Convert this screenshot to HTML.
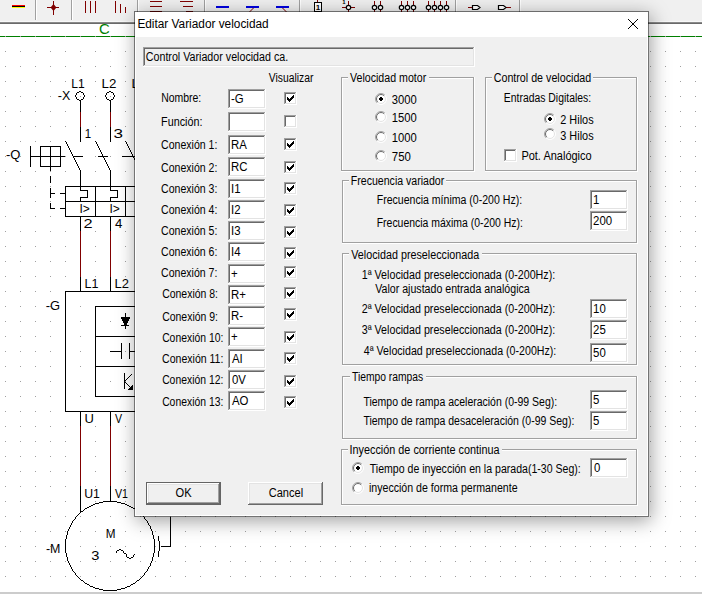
<!DOCTYPE html><html><head><meta charset="utf-8"><style>
html,body{margin:0;padding:0;width:702px;height:594px;overflow:hidden;background:#fff}
svg{position:absolute;left:0;top:0;display:block} text{font-family:"Liberation Sans", sans-serif}
#dlg{position:absolute;left:134px;top:11px;width:515px;height:506px;box-shadow:2px 4px 18px rgba(0,0,0,0.38);}
</style></head><body>
<svg width="702" height="594" shape-rendering="crispEdges">
<defs><pattern id="dots" x="5" y="6" width="15" height="15" patternUnits="userSpaceOnUse"><rect x="0" y="0" width="1" height="1" fill="#a0a0a0"/></pattern></defs>
<rect x="0" y="0" width="702" height="594" fill="#fff"/>
<rect x="0" y="24" width="702" height="566" fill="url(#dots)"/>
<rect x="0" y="0" width="702" height="22" fill="#f0f0f0"/>
<rect x="0" y="21" width="702" height="1" fill="#f8f8f8"/>
<rect x="0" y="22" width="702" height="1" fill="#8a8a8a"/>
<rect x="0" y="23" width="702" height="1" fill="#6a6a6a"/>
<rect x="0" y="592" width="702" height="2" fill="#cccccc"/>
<rect x="35" y="0" width="1" height="20" fill="#a0a0a0"/>
<rect x="36" y="0" width="1" height="20" fill="#fff"/>
<rect x="71" y="0" width="1" height="20" fill="#a0a0a0"/>
<rect x="72" y="0" width="1" height="20" fill="#fff"/>
<rect x="137" y="0" width="1" height="20" fill="#a0a0a0"/>
<rect x="138" y="0" width="1" height="20" fill="#fff"/>
<rect x="204" y="0" width="1" height="20" fill="#a0a0a0"/>
<rect x="205" y="0" width="1" height="20" fill="#fff"/>
<rect x="299" y="0" width="1" height="20" fill="#a0a0a0"/>
<rect x="300" y="0" width="1" height="20" fill="#fff"/>
<rect x="455" y="0" width="1" height="20" fill="#a0a0a0"/>
<rect x="456" y="0" width="1" height="20" fill="#fff"/>
<rect x="519" y="0" width="1" height="20" fill="#a0a0a0"/>
<rect x="520" y="0" width="1" height="20" fill="#fff"/>
<rect x="12" y="5" width="13" height="1" fill="#ff0000"/>
<rect x="12" y="6" width="13" height="1" fill="#000"/>
<rect x="12" y="7" width="13" height="1" fill="#ffff00"/>
<rect x="47" y="7" width="12" height="1" fill="#800000"/>
<rect x="53" y="1" width="1" height="14" fill="#800000"/>
<path d="M53.5,4 L56.5,7.5 L53.5,11 L50.5,7.5Z" fill="#800000" shape-rendering="geometricPrecision"/>
<rect x="85" y="1" width="1" height="12" fill="#800000"/>
<rect x="90" y="1" width="1" height="12" fill="#800000"/>
<rect x="95" y="1" width="1" height="12" fill="#800000"/>
<rect x="115" y="1" width="1" height="12" fill="#800000"/>
<rect x="120" y="4" width="1" height="9" fill="#800000"/>
<rect x="125" y="7" width="1" height="6" fill="#800000"/>
<rect x="150" y="1" width="12" height="1" fill="#800000"/>
<rect x="150" y="6" width="12" height="1" fill="#800000"/>
<rect x="150" y="11" width="12" height="1" fill="#800000"/>
<rect x="180" y="1" width="13" height="1" fill="#800000"/>
<rect x="183" y="6" width="10" height="1" fill="#800000"/>
<rect x="186" y="11" width="7" height="1" fill="#800000"/>
<rect x="216" y="6" width="13" height="2" fill="#0000e0"/>
<rect x="246" y="6" width="13" height="2" fill="#0000e0"/>
<rect x="276" y="6" width="13" height="2" fill="#0000e0"/>
<path d="M249.5,12 L253.5,8 M282.5,8 L286.5,12" stroke="#800000" fill="none" shape-rendering="geometricPrecision"/>
<rect x="317" y="0" width="1" height="3" fill="#800000"/>
<rect x="314" y="2" width="8" height="10" fill="#000"/>
<rect x="315" y="3" width="6" height="8" fill="#fff"/>
<text x="318" y="10" font-size="8" font-weight="bold" text-anchor="middle" fill="#000">1</text>
<rect x="348" y="1" width="1" height="12" fill="#800000"/>
<rect x="342" y="7" width="13" height="1" fill="#800000"/>
<circle cx="348.5" cy="7.5" r="2.2" fill="#fff" stroke="#000" stroke-width="1.2" shape-rendering="geometricPrecision"/>
<text x="344" y="4" font-size="6" font-weight="bold" text-anchor="middle" fill="#000">1</text>
<rect x="374" y="1" width="1" height="12" fill="#800000"/>
<circle cx="374.5" cy="7.5" r="2.2" fill="#fff" stroke="#000" stroke-width="1.2" shape-rendering="geometricPrecision"/>
<rect x="380" y="1" width="1" height="12" fill="#800000"/>
<circle cx="380.5" cy="7.5" r="2.2" fill="#fff" stroke="#000" stroke-width="1.2" shape-rendering="geometricPrecision"/>
<rect x="401" y="1" width="1" height="12" fill="#800000"/>
<circle cx="401.5" cy="7.5" r="2.2" fill="#fff" stroke="#000" stroke-width="1.2" shape-rendering="geometricPrecision"/>
<rect x="407" y="1" width="1" height="12" fill="#800000"/>
<circle cx="407.5" cy="7.5" r="2.2" fill="#fff" stroke="#000" stroke-width="1.2" shape-rendering="geometricPrecision"/>
<rect x="413" y="1" width="1" height="12" fill="#800000"/>
<circle cx="413.5" cy="7.5" r="2.2" fill="#fff" stroke="#000" stroke-width="1.2" shape-rendering="geometricPrecision"/>
<rect x="428" y="1" width="1" height="12" fill="#800000"/>
<circle cx="428.5" cy="7.5" r="2.2" fill="#fff" stroke="#000" stroke-width="1.2" shape-rendering="geometricPrecision"/>
<rect x="434" y="1" width="1" height="12" fill="#800000"/>
<circle cx="434.5" cy="7.5" r="2.2" fill="#fff" stroke="#000" stroke-width="1.2" shape-rendering="geometricPrecision"/>
<rect x="440" y="1" width="1" height="12" fill="#800000"/>
<circle cx="440.5" cy="7.5" r="2.2" fill="#fff" stroke="#000" stroke-width="1.2" shape-rendering="geometricPrecision"/>
<rect x="446" y="1" width="1" height="12" fill="#800000"/>
<circle cx="446.5" cy="7.5" r="2.2" fill="#fff" stroke="#000" stroke-width="1.2" shape-rendering="geometricPrecision"/>
<rect x="468" y="7" width="5" height="1" fill="#800000"/>
<path d="M472.5,5.5 L477.5,5.5 L480,7.5 L477.5,9.5 L472.5,9.5Z" fill="#fff" stroke="#000" stroke-width="1.2" shape-rendering="geometricPrecision"/>
<rect x="505" y="7" width="6" height="1" fill="#800000"/>
<path d="M498.5,5.5 L503.5,5.5 L506,7.5 L503.5,9.5 L498.5,9.5Z" fill="#fff" stroke="#000" stroke-width="1.2" shape-rendering="geometricPrecision"/>
<rect x="0" y="36" width="5" height="1" fill="#008000"/>
<rect x="6" y="36" width="14" height="1" fill="#008000"/>
<rect x="21" y="36" width="14" height="1" fill="#008000"/>
<rect x="36" y="36" width="14" height="1" fill="#008000"/>
<rect x="51" y="36" width="14" height="1" fill="#008000"/>
<rect x="66" y="36" width="14" height="1" fill="#008000"/>
<rect x="81" y="36" width="14" height="1" fill="#008000"/>
<rect x="96" y="36" width="14" height="1" fill="#008000"/>
<rect x="111" y="36" width="14" height="1" fill="#008000"/>
<rect x="126" y="36" width="14" height="1" fill="#008000"/>
<rect x="141" y="36" width="14" height="1" fill="#008000"/>
<rect x="156" y="36" width="14" height="1" fill="#008000"/>
<rect x="171" y="36" width="14" height="1" fill="#008000"/>
<rect x="186" y="36" width="14" height="1" fill="#008000"/>
<rect x="201" y="36" width="14" height="1" fill="#008000"/>
<rect x="216" y="36" width="14" height="1" fill="#008000"/>
<rect x="231" y="36" width="14" height="1" fill="#008000"/>
<rect x="246" y="36" width="14" height="1" fill="#008000"/>
<rect x="261" y="36" width="14" height="1" fill="#008000"/>
<rect x="276" y="36" width="14" height="1" fill="#008000"/>
<rect x="291" y="36" width="14" height="1" fill="#008000"/>
<rect x="306" y="36" width="14" height="1" fill="#008000"/>
<rect x="321" y="36" width="14" height="1" fill="#008000"/>
<rect x="336" y="36" width="14" height="1" fill="#008000"/>
<rect x="351" y="36" width="14" height="1" fill="#008000"/>
<rect x="366" y="36" width="14" height="1" fill="#008000"/>
<rect x="381" y="36" width="14" height="1" fill="#008000"/>
<rect x="396" y="36" width="14" height="1" fill="#008000"/>
<rect x="411" y="36" width="14" height="1" fill="#008000"/>
<rect x="426" y="36" width="14" height="1" fill="#008000"/>
<rect x="441" y="36" width="14" height="1" fill="#008000"/>
<rect x="456" y="36" width="14" height="1" fill="#008000"/>
<rect x="471" y="36" width="14" height="1" fill="#008000"/>
<rect x="486" y="36" width="14" height="1" fill="#008000"/>
<rect x="501" y="36" width="14" height="1" fill="#008000"/>
<rect x="516" y="36" width="14" height="1" fill="#008000"/>
<rect x="531" y="36" width="14" height="1" fill="#008000"/>
<rect x="546" y="36" width="14" height="1" fill="#008000"/>
<rect x="561" y="36" width="14" height="1" fill="#008000"/>
<rect x="576" y="36" width="14" height="1" fill="#008000"/>
<rect x="591" y="36" width="14" height="1" fill="#008000"/>
<rect x="606" y="36" width="14" height="1" fill="#008000"/>
<rect x="621" y="36" width="14" height="1" fill="#008000"/>
<rect x="636" y="36" width="14" height="1" fill="#008000"/>
<rect x="651" y="36" width="14" height="1" fill="#008000"/>
<rect x="666" y="36" width="14" height="1" fill="#008000"/>
<rect x="681" y="36" width="14" height="1" fill="#008000"/>
<rect x="696" y="36" width="6" height="1" fill="#008000"/>
<rect x="711" y="36" width="-9" height="1" fill="#008000"/>
<text x="99.04" y="34" font-size="14" fill="#008000" textLength="10.76" lengthAdjust="spacingAndGlyphs">C</text>
<rect x="79" y="91" width="1" height="1" fill="#000"/>
<rect x="80" y="91" width="1" height="1" fill="#000"/>
<rect x="77" y="92" width="1" height="1" fill="#000"/>
<rect x="78" y="92" width="1" height="1" fill="#000"/>
<rect x="81" y="92" width="1" height="1" fill="#000"/>
<rect x="82" y="92" width="1" height="1" fill="#000"/>
<rect x="76" y="93" width="1" height="1" fill="#000"/>
<rect x="83" y="93" width="1" height="1" fill="#000"/>
<rect x="76" y="94" width="1" height="1" fill="#000"/>
<rect x="83" y="94" width="1" height="1" fill="#000"/>
<rect x="75" y="95" width="1" height="1" fill="#000"/>
<rect x="84" y="95" width="1" height="1" fill="#000"/>
<rect x="75" y="96" width="1" height="1" fill="#000"/>
<rect x="84" y="96" width="1" height="1" fill="#000"/>
<rect x="76" y="97" width="1" height="1" fill="#000"/>
<rect x="83" y="97" width="1" height="1" fill="#000"/>
<rect x="76" y="98" width="1" height="1" fill="#000"/>
<rect x="83" y="98" width="1" height="1" fill="#000"/>
<rect x="77" y="99" width="1" height="1" fill="#000"/>
<rect x="78" y="99" width="1" height="1" fill="#000"/>
<rect x="81" y="99" width="1" height="1" fill="#000"/>
<rect x="82" y="99" width="1" height="1" fill="#000"/>
<rect x="79" y="100" width="1" height="1" fill="#000"/>
<rect x="80" y="100" width="1" height="1" fill="#000"/>
<rect x="80" y="101" width="1" height="11" fill="#000"/>
<rect x="80" y="112" width="1" height="15" fill="#800000"/>
<rect x="80" y="127" width="1" height="15" fill="#000"/>
<rect x="65" y="141" width="1" height="1" fill="#000"/>
<rect x="66" y="142" width="1" height="1" fill="#000"/>
<rect x="66" y="143" width="1" height="1" fill="#000"/>
<rect x="67" y="144" width="1" height="1" fill="#000"/>
<rect x="67" y="145" width="1" height="1" fill="#000"/>
<rect x="68" y="146" width="1" height="1" fill="#000"/>
<rect x="68" y="147" width="1" height="1" fill="#000"/>
<rect x="69" y="148" width="1" height="1" fill="#000"/>
<rect x="69" y="149" width="1" height="1" fill="#000"/>
<rect x="70" y="150" width="1" height="1" fill="#000"/>
<rect x="70" y="151" width="1" height="1" fill="#000"/>
<rect x="71" y="152" width="1" height="1" fill="#000"/>
<rect x="71" y="153" width="1" height="1" fill="#000"/>
<rect x="72" y="154" width="1" height="1" fill="#000"/>
<rect x="72" y="155" width="1" height="1" fill="#000"/>
<rect x="73" y="156" width="1" height="1" fill="#000"/>
<rect x="73" y="157" width="1" height="1" fill="#000"/>
<rect x="74" y="158" width="1" height="1" fill="#000"/>
<rect x="74" y="159" width="1" height="1" fill="#000"/>
<rect x="75" y="160" width="1" height="1" fill="#000"/>
<rect x="75" y="161" width="1" height="1" fill="#000"/>
<rect x="76" y="162" width="1" height="1" fill="#000"/>
<rect x="76" y="163" width="1" height="1" fill="#000"/>
<rect x="77" y="164" width="1" height="1" fill="#000"/>
<rect x="77" y="165" width="1" height="1" fill="#000"/>
<rect x="78" y="166" width="1" height="1" fill="#000"/>
<rect x="78" y="167" width="1" height="1" fill="#000"/>
<rect x="79" y="168" width="1" height="1" fill="#000"/>
<rect x="79" y="169" width="1" height="1" fill="#000"/>
<rect x="80" y="170" width="1" height="1" fill="#000"/>
<rect x="80" y="171" width="1" height="1" fill="#000"/>
<rect x="80" y="171" width="1" height="16" fill="#000"/>
<rect x="80" y="216" width="1" height="15" fill="#000"/>
<rect x="80" y="231" width="1" height="46" fill="#800000"/>
<rect x="80" y="277" width="1" height="15" fill="#000"/>
<rect x="80" y="411" width="1" height="15" fill="#000"/>
<rect x="80" y="426" width="1" height="61" fill="#800000"/>
<rect x="109" y="91" width="1" height="1" fill="#000"/>
<rect x="110" y="91" width="1" height="1" fill="#000"/>
<rect x="107" y="92" width="1" height="1" fill="#000"/>
<rect x="108" y="92" width="1" height="1" fill="#000"/>
<rect x="111" y="92" width="1" height="1" fill="#000"/>
<rect x="112" y="92" width="1" height="1" fill="#000"/>
<rect x="106" y="93" width="1" height="1" fill="#000"/>
<rect x="113" y="93" width="1" height="1" fill="#000"/>
<rect x="106" y="94" width="1" height="1" fill="#000"/>
<rect x="113" y="94" width="1" height="1" fill="#000"/>
<rect x="105" y="95" width="1" height="1" fill="#000"/>
<rect x="114" y="95" width="1" height="1" fill="#000"/>
<rect x="105" y="96" width="1" height="1" fill="#000"/>
<rect x="114" y="96" width="1" height="1" fill="#000"/>
<rect x="106" y="97" width="1" height="1" fill="#000"/>
<rect x="113" y="97" width="1" height="1" fill="#000"/>
<rect x="106" y="98" width="1" height="1" fill="#000"/>
<rect x="113" y="98" width="1" height="1" fill="#000"/>
<rect x="107" y="99" width="1" height="1" fill="#000"/>
<rect x="108" y="99" width="1" height="1" fill="#000"/>
<rect x="111" y="99" width="1" height="1" fill="#000"/>
<rect x="112" y="99" width="1" height="1" fill="#000"/>
<rect x="109" y="100" width="1" height="1" fill="#000"/>
<rect x="110" y="100" width="1" height="1" fill="#000"/>
<rect x="110" y="101" width="1" height="11" fill="#000"/>
<rect x="110" y="112" width="1" height="15" fill="#800000"/>
<rect x="110" y="127" width="1" height="15" fill="#000"/>
<rect x="95" y="141" width="1" height="1" fill="#000"/>
<rect x="96" y="142" width="1" height="1" fill="#000"/>
<rect x="96" y="143" width="1" height="1" fill="#000"/>
<rect x="97" y="144" width="1" height="1" fill="#000"/>
<rect x="97" y="145" width="1" height="1" fill="#000"/>
<rect x="98" y="146" width="1" height="1" fill="#000"/>
<rect x="98" y="147" width="1" height="1" fill="#000"/>
<rect x="99" y="148" width="1" height="1" fill="#000"/>
<rect x="99" y="149" width="1" height="1" fill="#000"/>
<rect x="100" y="150" width="1" height="1" fill="#000"/>
<rect x="100" y="151" width="1" height="1" fill="#000"/>
<rect x="101" y="152" width="1" height="1" fill="#000"/>
<rect x="101" y="153" width="1" height="1" fill="#000"/>
<rect x="102" y="154" width="1" height="1" fill="#000"/>
<rect x="102" y="155" width="1" height="1" fill="#000"/>
<rect x="103" y="156" width="1" height="1" fill="#000"/>
<rect x="103" y="157" width="1" height="1" fill="#000"/>
<rect x="104" y="158" width="1" height="1" fill="#000"/>
<rect x="104" y="159" width="1" height="1" fill="#000"/>
<rect x="105" y="160" width="1" height="1" fill="#000"/>
<rect x="105" y="161" width="1" height="1" fill="#000"/>
<rect x="106" y="162" width="1" height="1" fill="#000"/>
<rect x="106" y="163" width="1" height="1" fill="#000"/>
<rect x="107" y="164" width="1" height="1" fill="#000"/>
<rect x="107" y="165" width="1" height="1" fill="#000"/>
<rect x="108" y="166" width="1" height="1" fill="#000"/>
<rect x="108" y="167" width="1" height="1" fill="#000"/>
<rect x="109" y="168" width="1" height="1" fill="#000"/>
<rect x="109" y="169" width="1" height="1" fill="#000"/>
<rect x="110" y="170" width="1" height="1" fill="#000"/>
<rect x="110" y="171" width="1" height="1" fill="#000"/>
<rect x="110" y="171" width="1" height="16" fill="#000"/>
<rect x="110" y="216" width="1" height="15" fill="#000"/>
<rect x="110" y="231" width="1" height="46" fill="#800000"/>
<rect x="110" y="277" width="1" height="15" fill="#000"/>
<rect x="110" y="411" width="1" height="15" fill="#000"/>
<rect x="110" y="426" width="1" height="61" fill="#800000"/>
<rect x="139" y="91" width="1" height="1" fill="#000"/>
<rect x="140" y="91" width="1" height="1" fill="#000"/>
<rect x="137" y="92" width="1" height="1" fill="#000"/>
<rect x="138" y="92" width="1" height="1" fill="#000"/>
<rect x="141" y="92" width="1" height="1" fill="#000"/>
<rect x="142" y="92" width="1" height="1" fill="#000"/>
<rect x="136" y="93" width="1" height="1" fill="#000"/>
<rect x="143" y="93" width="1" height="1" fill="#000"/>
<rect x="136" y="94" width="1" height="1" fill="#000"/>
<rect x="143" y="94" width="1" height="1" fill="#000"/>
<rect x="135" y="95" width="1" height="1" fill="#000"/>
<rect x="144" y="95" width="1" height="1" fill="#000"/>
<rect x="135" y="96" width="1" height="1" fill="#000"/>
<rect x="144" y="96" width="1" height="1" fill="#000"/>
<rect x="136" y="97" width="1" height="1" fill="#000"/>
<rect x="143" y="97" width="1" height="1" fill="#000"/>
<rect x="136" y="98" width="1" height="1" fill="#000"/>
<rect x="143" y="98" width="1" height="1" fill="#000"/>
<rect x="137" y="99" width="1" height="1" fill="#000"/>
<rect x="138" y="99" width="1" height="1" fill="#000"/>
<rect x="141" y="99" width="1" height="1" fill="#000"/>
<rect x="142" y="99" width="1" height="1" fill="#000"/>
<rect x="139" y="100" width="1" height="1" fill="#000"/>
<rect x="140" y="100" width="1" height="1" fill="#000"/>
<rect x="140" y="101" width="1" height="11" fill="#000"/>
<rect x="140" y="112" width="1" height="15" fill="#800000"/>
<rect x="140" y="127" width="1" height="15" fill="#000"/>
<rect x="125" y="141" width="1" height="1" fill="#000"/>
<rect x="126" y="142" width="1" height="1" fill="#000"/>
<rect x="126" y="143" width="1" height="1" fill="#000"/>
<rect x="127" y="144" width="1" height="1" fill="#000"/>
<rect x="127" y="145" width="1" height="1" fill="#000"/>
<rect x="128" y="146" width="1" height="1" fill="#000"/>
<rect x="128" y="147" width="1" height="1" fill="#000"/>
<rect x="129" y="148" width="1" height="1" fill="#000"/>
<rect x="129" y="149" width="1" height="1" fill="#000"/>
<rect x="130" y="150" width="1" height="1" fill="#000"/>
<rect x="130" y="151" width="1" height="1" fill="#000"/>
<rect x="131" y="152" width="1" height="1" fill="#000"/>
<rect x="131" y="153" width="1" height="1" fill="#000"/>
<rect x="132" y="154" width="1" height="1" fill="#000"/>
<rect x="132" y="155" width="1" height="1" fill="#000"/>
<rect x="133" y="156" width="1" height="1" fill="#000"/>
<rect x="133" y="157" width="1" height="1" fill="#000"/>
<rect x="134" y="158" width="1" height="1" fill="#000"/>
<rect x="134" y="159" width="1" height="1" fill="#000"/>
<rect x="135" y="160" width="1" height="1" fill="#000"/>
<rect x="135" y="161" width="1" height="1" fill="#000"/>
<rect x="136" y="162" width="1" height="1" fill="#000"/>
<rect x="136" y="163" width="1" height="1" fill="#000"/>
<rect x="137" y="164" width="1" height="1" fill="#000"/>
<rect x="137" y="165" width="1" height="1" fill="#000"/>
<rect x="138" y="166" width="1" height="1" fill="#000"/>
<rect x="138" y="167" width="1" height="1" fill="#000"/>
<rect x="139" y="168" width="1" height="1" fill="#000"/>
<rect x="139" y="169" width="1" height="1" fill="#000"/>
<rect x="140" y="170" width="1" height="1" fill="#000"/>
<rect x="140" y="171" width="1" height="1" fill="#000"/>
<rect x="140" y="171" width="1" height="16" fill="#000"/>
<rect x="140" y="216" width="1" height="15" fill="#000"/>
<rect x="140" y="231" width="1" height="46" fill="#800000"/>
<rect x="140" y="277" width="1" height="15" fill="#000"/>
<rect x="140" y="411" width="1" height="15" fill="#000"/>
<rect x="140" y="426" width="1" height="61" fill="#800000"/>
<text x="71.19" y="88" font-size="12" fill="#000" textLength="13.47" lengthAdjust="spacingAndGlyphs">L1</text>
<text x="101.59" y="88" font-size="12" fill="#000" textLength="14.81" lengthAdjust="spacingAndGlyphs">L2</text>
<text x="131.42" y="88" font-size="12" fill="#000" textLength="14.47" lengthAdjust="spacingAndGlyphs">L3</text>
<text x="57.76" y="100" font-size="12" fill="#000" textLength="12.44" lengthAdjust="spacingAndGlyphs">-X</text>
<text x="84.84" y="138" font-size="12" fill="#000" textLength="6.42" lengthAdjust="spacingAndGlyphs">1</text>
<text x="113.48" y="138" font-size="12" fill="#000" textLength="9.50" lengthAdjust="spacingAndGlyphs">3</text>
<rect x="30" y="146" width="1" height="21" fill="#000"/>
<rect x="30" y="156" width="35" height="1" fill="#000"/>
<rect x="40" y="146" width="21" height="1" fill="#000"/>
<rect x="40" y="166" width="21" height="1" fill="#000"/>
<rect x="40" y="146" width="1" height="21" fill="#000"/>
<rect x="60" y="146" width="1" height="21" fill="#000"/>
<rect x="50" y="146" width="1" height="25" fill="#000"/>
<rect x="73" y="156" width="10" height="1" fill="#000"/>
<rect x="98" y="156" width="10" height="1" fill="#000"/>
<rect x="122" y="156" width="14" height="1" fill="#000"/>
<text x="5.92" y="159" font-size="12" fill="#000" textLength="14.46" lengthAdjust="spacingAndGlyphs">-Q</text>
<rect x="50" y="176" width="1" height="7" fill="#000"/>
<rect x="50" y="188" width="1" height="10" fill="#000"/>
<rect x="50" y="203" width="1" height="6" fill="#000"/>
<rect x="50" y="193" width="5" height="1" fill="#000"/>
<rect x="60" y="193" width="6" height="1" fill="#000"/>
<rect x="50" y="208" width="5" height="1" fill="#000"/>
<rect x="60" y="208" width="6" height="1" fill="#000"/>
<rect x="65" y="186" width="76" height="1" fill="#000"/>
<rect x="65" y="201" width="76" height="1" fill="#000"/>
<rect x="65" y="216" width="76" height="1" fill="#000"/>
<rect x="65" y="186" width="1" height="31" fill="#000"/>
<rect x="95" y="186" width="1" height="31" fill="#000"/>
<rect x="125" y="186" width="1" height="31" fill="#000"/>
<rect x="80" y="186" width="1" height="5" fill="#000"/>
<rect x="80" y="190" width="8" height="1" fill="#000"/>
<rect x="87" y="190" width="1" height="8" fill="#000"/>
<rect x="80" y="197" width="8" height="1" fill="#000"/>
<rect x="80" y="197" width="1" height="5" fill="#000"/>
<text x="79.50" y="213" font-size="12" fill="#000" textLength="10.34" lengthAdjust="spacingAndGlyphs">I&gt;</text>
<rect x="110" y="186" width="1" height="5" fill="#000"/>
<rect x="110" y="190" width="8" height="1" fill="#000"/>
<rect x="117" y="190" width="1" height="8" fill="#000"/>
<rect x="110" y="197" width="8" height="1" fill="#000"/>
<rect x="110" y="197" width="1" height="5" fill="#000"/>
<text x="109.50" y="213" font-size="12" fill="#000" textLength="10.34" lengthAdjust="spacingAndGlyphs">I&gt;</text>
<text x="83.54" y="228" font-size="12" fill="#000" textLength="9.09" lengthAdjust="spacingAndGlyphs">2</text>
<text x="115.10" y="228" font-size="12" fill="#000" textLength="7.36" lengthAdjust="spacingAndGlyphs">4</text>
<text x="84.46" y="288" font-size="12" fill="#000" textLength="13.92" lengthAdjust="spacingAndGlyphs">L1</text>
<text x="114.42" y="288" font-size="12" fill="#000" textLength="14.47" lengthAdjust="spacingAndGlyphs">L2</text>
<rect x="65" y="291" width="76" height="1" fill="#000"/>
<rect x="65" y="291" width="1" height="121" fill="#000"/>
<rect x="65" y="411" width="76" height="1" fill="#000"/>
<rect x="95" y="306" width="46" height="1" fill="#000"/>
<rect x="95" y="306" width="1" height="91" fill="#000"/>
<rect x="95" y="336" width="46" height="1" fill="#000"/>
<rect x="95" y="366" width="46" height="1" fill="#000"/>
<rect x="95" y="396" width="46" height="1" fill="#000"/>
<text x="45.72" y="310" font-size="12" fill="#000" textLength="14.34" lengthAdjust="spacingAndGlyphs">-G</text>
<rect x="125" y="313" width="1" height="16" fill="#000"/>
<rect x="121" y="317" width="9" height="1" fill="#000"/>
<rect x="121" y="318" width="9" height="1" fill="#000"/>
<rect x="122" y="319" width="7" height="1" fill="#000"/>
<rect x="122" y="320" width="7" height="1" fill="#000"/>
<rect x="123" y="321" width="5" height="1" fill="#000"/>
<rect x="123" y="322" width="5" height="1" fill="#000"/>
<rect x="124" y="323" width="3" height="1" fill="#000"/>
<rect x="124" y="324" width="3" height="1" fill="#000"/>
<rect x="121" y="325" width="8" height="1" fill="#000"/>
<rect x="110" y="351" width="12" height="1" fill="#000"/>
<rect x="121" y="343" width="1" height="16" fill="#000"/>
<rect x="129" y="343" width="1" height="16" fill="#000"/>
<rect x="129" y="351" width="7" height="1" fill="#000"/>
<rect x="124" y="373" width="1" height="16" fill="#000"/>
<rect x="131" y="374" width="1" height="1" fill="#000"/>
<rect x="130" y="375" width="1" height="1" fill="#000"/>
<rect x="129" y="376" width="1" height="1" fill="#000"/>
<rect x="128" y="377" width="1" height="1" fill="#000"/>
<rect x="127" y="378" width="1" height="1" fill="#000"/>
<rect x="126" y="379" width="1" height="1" fill="#000"/>
<rect x="125" y="380" width="1" height="1" fill="#000"/>
<rect x="125" y="382" width="1" height="1" fill="#000"/>
<rect x="126" y="383" width="1" height="1" fill="#000"/>
<rect x="127" y="384" width="1" height="1" fill="#000"/>
<rect x="128" y="385" width="1" height="1" fill="#000"/>
<rect x="129" y="386" width="1" height="1" fill="#000"/>
<rect x="130" y="387" width="1" height="1" fill="#000"/>
<rect x="132" y="385" width="1" height="1" fill="#000"/>
<rect x="131" y="386" width="2" height="1" fill="#000"/>
<rect x="130" y="387" width="3" height="1" fill="#000"/>
<rect x="129" y="388" width="4" height="1" fill="#000"/>
<rect x="128" y="389" width="5" height="1" fill="#000"/>
<text x="84.51" y="423" font-size="12" fill="#000" textLength="9.42" lengthAdjust="spacingAndGlyphs">U</text>
<text x="115.00" y="423" font-size="12" fill="#000" textLength="7.11" lengthAdjust="spacingAndGlyphs">V</text>
<text x="84.28" y="498" font-size="12" fill="#000" textLength="15.67" lengthAdjust="spacingAndGlyphs">U1</text>
<text x="115.00" y="498" font-size="12" fill="#000" textLength="13.01" lengthAdjust="spacingAndGlyphs">V1</text>
<rect x="80" y="486" width="1" height="27" fill="#000"/>
<rect x="110" y="486" width="1" height="16" fill="#000"/>
<rect x="103" y="501" width="14" height="1" fill="#000"/>
<rect x="99" y="502" width="4" height="1" fill="#000"/>
<rect x="117" y="502" width="4" height="1" fill="#000"/>
<rect x="95" y="503" width="4" height="1" fill="#000"/>
<rect x="121" y="503" width="4" height="1" fill="#000"/>
<rect x="93" y="504" width="2" height="1" fill="#000"/>
<rect x="125" y="504" width="2" height="1" fill="#000"/>
<rect x="91" y="505" width="2" height="1" fill="#000"/>
<rect x="127" y="505" width="2" height="1" fill="#000"/>
<rect x="89" y="506" width="2" height="1" fill="#000"/>
<rect x="129" y="506" width="2" height="1" fill="#000"/>
<rect x="87" y="507" width="2" height="1" fill="#000"/>
<rect x="131" y="507" width="2" height="1" fill="#000"/>
<rect x="85" y="508" width="2" height="1" fill="#000"/>
<rect x="133" y="508" width="2" height="1" fill="#000"/>
<rect x="84" y="509" width="1" height="1" fill="#000"/>
<rect x="135" y="509" width="1" height="1" fill="#000"/>
<rect x="83" y="510" width="1" height="1" fill="#000"/>
<rect x="136" y="510" width="1" height="1" fill="#000"/>
<rect x="81" y="511" width="2" height="1" fill="#000"/>
<rect x="137" y="511" width="2" height="1" fill="#000"/>
<rect x="80" y="512" width="1" height="1" fill="#000"/>
<rect x="139" y="512" width="1" height="1" fill="#000"/>
<rect x="79" y="513" width="1" height="1" fill="#000"/>
<rect x="140" y="513" width="1" height="1" fill="#000"/>
<rect x="78" y="514" width="1" height="1" fill="#000"/>
<rect x="141" y="514" width="1" height="1" fill="#000"/>
<rect x="77" y="515" width="1" height="1" fill="#000"/>
<rect x="142" y="515" width="1" height="1" fill="#000"/>
<rect x="76" y="516" width="1" height="1" fill="#000"/>
<rect x="143" y="516" width="1" height="1" fill="#000"/>
<rect x="75" y="517" width="1" height="1" fill="#000"/>
<rect x="144" y="517" width="1" height="1" fill="#000"/>
<rect x="75" y="518" width="1" height="1" fill="#000"/>
<rect x="144" y="518" width="1" height="1" fill="#000"/>
<rect x="74" y="519" width="1" height="1" fill="#000"/>
<rect x="145" y="519" width="1" height="1" fill="#000"/>
<rect x="73" y="520" width="1" height="1" fill="#000"/>
<rect x="146" y="520" width="1" height="1" fill="#000"/>
<rect x="72" y="521" width="1" height="1" fill="#000"/>
<rect x="147" y="521" width="1" height="1" fill="#000"/>
<rect x="72" y="522" width="1" height="1" fill="#000"/>
<rect x="147" y="522" width="1" height="1" fill="#000"/>
<rect x="71" y="523" width="1" height="1" fill="#000"/>
<rect x="148" y="523" width="1" height="1" fill="#000"/>
<rect x="71" y="524" width="1" height="1" fill="#000"/>
<rect x="148" y="524" width="1" height="1" fill="#000"/>
<rect x="70" y="525" width="1" height="1" fill="#000"/>
<rect x="149" y="525" width="1" height="1" fill="#000"/>
<rect x="70" y="526" width="1" height="1" fill="#000"/>
<rect x="150" y="526" width="1" height="1" fill="#000"/>
<rect x="69" y="527" width="1" height="1" fill="#000"/>
<rect x="150" y="527" width="1" height="1" fill="#000"/>
<rect x="69" y="528" width="1" height="1" fill="#000"/>
<rect x="150" y="528" width="1" height="1" fill="#000"/>
<rect x="68" y="529" width="1" height="1" fill="#000"/>
<rect x="151" y="529" width="1" height="1" fill="#000"/>
<rect x="68" y="530" width="1" height="1" fill="#000"/>
<rect x="151" y="530" width="1" height="1" fill="#000"/>
<rect x="67" y="531" width="1" height="1" fill="#000"/>
<rect x="152" y="531" width="1" height="1" fill="#000"/>
<rect x="67" y="532" width="1" height="1" fill="#000"/>
<rect x="152" y="532" width="1" height="1" fill="#000"/>
<rect x="67" y="533" width="1" height="1" fill="#000"/>
<rect x="152" y="533" width="1" height="1" fill="#000"/>
<rect x="67" y="534" width="1" height="1" fill="#000"/>
<rect x="152" y="534" width="1" height="1" fill="#000"/>
<rect x="66" y="535" width="1" height="1" fill="#000"/>
<rect x="153" y="535" width="1" height="1" fill="#000"/>
<rect x="66" y="536" width="1" height="1" fill="#000"/>
<rect x="153" y="536" width="1" height="1" fill="#000"/>
<rect x="66" y="537" width="1" height="1" fill="#000"/>
<rect x="153" y="537" width="1" height="1" fill="#000"/>
<rect x="66" y="538" width="1" height="1" fill="#000"/>
<rect x="153" y="538" width="1" height="1" fill="#000"/>
<rect x="65" y="539" width="1" height="1" fill="#000"/>
<rect x="154" y="539" width="1" height="1" fill="#000"/>
<rect x="65" y="540" width="1" height="1" fill="#000"/>
<rect x="154" y="540" width="1" height="1" fill="#000"/>
<rect x="65" y="541" width="1" height="1" fill="#000"/>
<rect x="154" y="541" width="1" height="1" fill="#000"/>
<rect x="65" y="542" width="1" height="1" fill="#000"/>
<rect x="154" y="542" width="1" height="1" fill="#000"/>
<rect x="65" y="543" width="1" height="1" fill="#000"/>
<rect x="154" y="543" width="1" height="1" fill="#000"/>
<rect x="65" y="544" width="1" height="1" fill="#000"/>
<rect x="154" y="544" width="1" height="1" fill="#000"/>
<rect x="65" y="545" width="1" height="1" fill="#000"/>
<rect x="154" y="545" width="1" height="1" fill="#000"/>
<rect x="65" y="546" width="1" height="1" fill="#000"/>
<rect x="154" y="546" width="1" height="1" fill="#000"/>
<rect x="65" y="547" width="1" height="1" fill="#000"/>
<rect x="154" y="547" width="1" height="1" fill="#000"/>
<rect x="65" y="548" width="1" height="1" fill="#000"/>
<rect x="154" y="548" width="1" height="1" fill="#000"/>
<rect x="65" y="549" width="1" height="1" fill="#000"/>
<rect x="154" y="549" width="1" height="1" fill="#000"/>
<rect x="65" y="550" width="1" height="1" fill="#000"/>
<rect x="154" y="550" width="1" height="1" fill="#000"/>
<rect x="65" y="551" width="1" height="1" fill="#000"/>
<rect x="154" y="551" width="1" height="1" fill="#000"/>
<rect x="65" y="552" width="1" height="1" fill="#000"/>
<rect x="154" y="552" width="1" height="1" fill="#000"/>
<rect x="66" y="553" width="1" height="1" fill="#000"/>
<rect x="153" y="553" width="1" height="1" fill="#000"/>
<rect x="66" y="554" width="1" height="1" fill="#000"/>
<rect x="153" y="554" width="1" height="1" fill="#000"/>
<rect x="66" y="555" width="1" height="1" fill="#000"/>
<rect x="153" y="555" width="1" height="1" fill="#000"/>
<rect x="66" y="556" width="1" height="1" fill="#000"/>
<rect x="153" y="556" width="1" height="1" fill="#000"/>
<rect x="67" y="557" width="1" height="1" fill="#000"/>
<rect x="152" y="557" width="1" height="1" fill="#000"/>
<rect x="67" y="558" width="1" height="1" fill="#000"/>
<rect x="152" y="558" width="1" height="1" fill="#000"/>
<rect x="67" y="559" width="1" height="1" fill="#000"/>
<rect x="152" y="559" width="1" height="1" fill="#000"/>
<rect x="67" y="560" width="1" height="1" fill="#000"/>
<rect x="152" y="560" width="1" height="1" fill="#000"/>
<rect x="68" y="561" width="1" height="1" fill="#000"/>
<rect x="151" y="561" width="1" height="1" fill="#000"/>
<rect x="68" y="562" width="1" height="1" fill="#000"/>
<rect x="151" y="562" width="1" height="1" fill="#000"/>
<rect x="69" y="563" width="1" height="1" fill="#000"/>
<rect x="150" y="563" width="1" height="1" fill="#000"/>
<rect x="69" y="564" width="1" height="1" fill="#000"/>
<rect x="150" y="564" width="1" height="1" fill="#000"/>
<rect x="70" y="565" width="1" height="1" fill="#000"/>
<rect x="150" y="565" width="1" height="1" fill="#000"/>
<rect x="70" y="566" width="1" height="1" fill="#000"/>
<rect x="149" y="566" width="1" height="1" fill="#000"/>
<rect x="71" y="567" width="1" height="1" fill="#000"/>
<rect x="148" y="567" width="1" height="1" fill="#000"/>
<rect x="71" y="568" width="1" height="1" fill="#000"/>
<rect x="148" y="568" width="1" height="1" fill="#000"/>
<rect x="72" y="569" width="1" height="1" fill="#000"/>
<rect x="147" y="569" width="1" height="1" fill="#000"/>
<rect x="72" y="570" width="1" height="1" fill="#000"/>
<rect x="147" y="570" width="1" height="1" fill="#000"/>
<rect x="73" y="571" width="1" height="1" fill="#000"/>
<rect x="146" y="571" width="1" height="1" fill="#000"/>
<rect x="74" y="572" width="1" height="1" fill="#000"/>
<rect x="145" y="572" width="1" height="1" fill="#000"/>
<rect x="75" y="573" width="1" height="1" fill="#000"/>
<rect x="144" y="573" width="1" height="1" fill="#000"/>
<rect x="75" y="574" width="1" height="1" fill="#000"/>
<rect x="144" y="574" width="1" height="1" fill="#000"/>
<rect x="76" y="575" width="1" height="1" fill="#000"/>
<rect x="143" y="575" width="1" height="1" fill="#000"/>
<rect x="77" y="576" width="1" height="1" fill="#000"/>
<rect x="142" y="576" width="1" height="1" fill="#000"/>
<rect x="78" y="577" width="1" height="1" fill="#000"/>
<rect x="141" y="577" width="1" height="1" fill="#000"/>
<rect x="79" y="578" width="1" height="1" fill="#000"/>
<rect x="140" y="578" width="1" height="1" fill="#000"/>
<rect x="80" y="579" width="1" height="1" fill="#000"/>
<rect x="139" y="579" width="1" height="1" fill="#000"/>
<rect x="81" y="580" width="2" height="1" fill="#000"/>
<rect x="137" y="580" width="2" height="1" fill="#000"/>
<rect x="83" y="581" width="1" height="1" fill="#000"/>
<rect x="136" y="581" width="1" height="1" fill="#000"/>
<rect x="84" y="582" width="1" height="1" fill="#000"/>
<rect x="135" y="582" width="1" height="1" fill="#000"/>
<rect x="85" y="583" width="2" height="1" fill="#000"/>
<rect x="133" y="583" width="2" height="1" fill="#000"/>
<rect x="87" y="584" width="2" height="1" fill="#000"/>
<rect x="131" y="584" width="2" height="1" fill="#000"/>
<rect x="89" y="585" width="1" height="1" fill="#000"/>
<rect x="130" y="585" width="1" height="1" fill="#000"/>
<rect x="90" y="586" width="3" height="1" fill="#000"/>
<rect x="127" y="586" width="3" height="1" fill="#000"/>
<rect x="93" y="587" width="2" height="1" fill="#000"/>
<rect x="125" y="587" width="2" height="1" fill="#000"/>
<rect x="95" y="588" width="4" height="1" fill="#000"/>
<rect x="121" y="588" width="4" height="1" fill="#000"/>
<rect x="99" y="589" width="4" height="1" fill="#000"/>
<rect x="117" y="589" width="4" height="1" fill="#000"/>
<rect x="103" y="590" width="14" height="1" fill="#000"/>
<text x="105.83" y="538" font-size="12" fill="#000" textLength="9.75" lengthAdjust="spacingAndGlyphs">M</text>
<text x="91.38" y="560" font-size="12" fill="#000" textLength="8.16" lengthAdjust="spacingAndGlyphs">3</text>
<text x="45.97" y="553" font-size="12" fill="#000" textLength="14.47" lengthAdjust="spacingAndGlyphs">-M</text>
<rect x="119" y="549" width="2" height="1" fill="#000"/>
<rect x="117" y="550" width="2" height="1" fill="#000"/>
<rect x="121" y="550" width="2" height="1" fill="#000"/>
<rect x="116" y="551" width="1" height="1" fill="#000"/>
<rect x="123" y="551" width="1" height="1" fill="#000"/>
<rect x="116" y="552" width="1" height="1" fill="#000"/>
<rect x="123" y="552" width="1" height="1" fill="#000"/>
<rect x="124" y="553" width="2" height="1" fill="#000"/>
<rect x="126" y="554" width="1" height="1" fill="#000"/>
<rect x="134" y="554" width="1" height="1" fill="#000"/>
<rect x="126" y="555" width="1" height="1" fill="#000"/>
<rect x="133" y="555" width="1" height="1" fill="#000"/>
<rect x="126" y="556" width="1" height="1" fill="#000"/>
<rect x="133" y="556" width="1" height="1" fill="#000"/>
<rect x="127" y="557" width="2" height="1" fill="#000"/>
<rect x="131" y="557" width="2" height="1" fill="#000"/>
<rect x="129" y="558" width="2" height="1" fill="#000"/>
<rect x="158" y="536" width="1" height="5" fill="#000"/>
<rect x="159" y="541" width="1" height="10" fill="#000"/>
<rect x="158" y="551" width="1" height="6" fill="#000"/>
<rect x="161" y="546" width="10" height="1" fill="#000"/>
<rect x="170" y="517" width="1" height="30" fill="#000"/>
</svg>
<div id="dlg">
<svg width="515" height="506" shape-rendering="crispEdges" style="left:0;top:0">
<g transform="translate(-134,-11)">
<rect x="134" y="11" width="515" height="1" fill="rgba(0,0,0,0.55)"/>
<rect x="134" y="516" width="515" height="1" fill="rgba(0,0,0,0.55)"/>
<rect x="134" y="12" width="1" height="504" fill="rgba(0,0,0,0.55)"/>
<rect x="648" y="12" width="1" height="504" fill="rgba(0,0,0,0.55)"/>
<rect x="135" y="12" width="513" height="25" fill="#fff"/>
<rect x="135" y="37" width="513" height="479" fill="#f0f0f0"/>
<rect x="135" y="37" width="1" height="479" fill="#fff"/>
<rect x="647" y="37" width="1" height="479" fill="#fff"/>
<rect x="135" y="515" width="513" height="1" fill="#fff"/>
<text x="137.41" y="28" font-size="12" fill="#000" textLength="131.26" lengthAdjust="spacingAndGlyphs">Editar Variador velocidad</text>
<rect x="628" y="19" width="1" height="1" fill="#000"/>
<rect x="637" y="19" width="1" height="1" fill="#000"/>
<rect x="629" y="20" width="1" height="1" fill="#000"/>
<rect x="636" y="20" width="1" height="1" fill="#000"/>
<rect x="630" y="21" width="1" height="1" fill="#000"/>
<rect x="635" y="21" width="1" height="1" fill="#000"/>
<rect x="631" y="22" width="1" height="1" fill="#000"/>
<rect x="634" y="22" width="1" height="1" fill="#000"/>
<rect x="632" y="23" width="1" height="1" fill="#000"/>
<rect x="633" y="23" width="1" height="1" fill="#000"/>
<rect x="633" y="24" width="1" height="1" fill="#000"/>
<rect x="632" y="24" width="1" height="1" fill="#000"/>
<rect x="634" y="25" width="1" height="1" fill="#000"/>
<rect x="631" y="25" width="1" height="1" fill="#000"/>
<rect x="635" y="26" width="1" height="1" fill="#000"/>
<rect x="630" y="26" width="1" height="1" fill="#000"/>
<rect x="636" y="27" width="1" height="1" fill="#000"/>
<rect x="629" y="27" width="1" height="1" fill="#000"/>
<rect x="637" y="28" width="1" height="1" fill="#000"/>
<rect x="628" y="28" width="1" height="1" fill="#000"/>
<rect x="143" y="47" width="332" height="20" fill="#f0f0f0"/>
<rect x="143" y="47" width="332" height="1" fill="#a0a0a0"/>
<rect x="143" y="47" width="1" height="20" fill="#a0a0a0"/>
<rect x="144" y="48" width="330" height="1" fill="#696969"/>
<rect x="144" y="48" width="1" height="18" fill="#696969"/>
<rect x="143" y="66" width="332" height="1" fill="#fff"/>
<rect x="474" y="47" width="1" height="20" fill="#fff"/>
<rect x="144" y="65" width="330" height="1" fill="#e3e3e3"/>
<rect x="473" y="48" width="1" height="18" fill="#e3e3e3"/>
<text x="145.81" y="61" font-size="12" fill="#000" textLength="142.37" lengthAdjust="spacingAndGlyphs">Control Variador velocidad ca.</text>
<text x="268.80" y="82" font-size="12" fill="#000" textLength="44.64" lengthAdjust="spacingAndGlyphs">Visualizar</text>
<text x="161.13" y="102" font-size="12" fill="#000" textLength="40.16" lengthAdjust="spacingAndGlyphs">Nombre:</text>
<rect x="228" y="89" width="38" height="20" fill="#fff"/>
<rect x="228" y="89" width="38" height="1" fill="#a0a0a0"/>
<rect x="228" y="89" width="1" height="20" fill="#a0a0a0"/>
<rect x="229" y="90" width="36" height="1" fill="#696969"/>
<rect x="229" y="90" width="1" height="18" fill="#696969"/>
<rect x="228" y="108" width="38" height="1" fill="#fff"/>
<rect x="265" y="89" width="1" height="20" fill="#fff"/>
<rect x="229" y="107" width="36" height="1" fill="#e3e3e3"/>
<rect x="264" y="90" width="1" height="18" fill="#e3e3e3"/>
<text x="231.05" y="103" font-size="12" fill="#000" textLength="12.68" lengthAdjust="spacingAndGlyphs">-G</text>
<rect x="284" y="92" width="13" height="13" fill="#fff"/>
<rect x="284" y="92" width="13" height="1" fill="#a0a0a0"/>
<rect x="284" y="92" width="1" height="13" fill="#a0a0a0"/>
<rect x="285" y="93" width="11" height="1" fill="#696969"/>
<rect x="285" y="93" width="1" height="11" fill="#696969"/>
<rect x="284" y="104" width="13" height="1" fill="#fff"/>
<rect x="296" y="92" width="1" height="13" fill="#fff"/>
<rect x="285" y="103" width="11" height="1" fill="#e3e3e3"/>
<rect x="295" y="93" width="1" height="11" fill="#e3e3e3"/>
<rect x="293" y="95" width="1" height="1" fill="#000"/>
<rect x="292" y="96" width="1" height="1" fill="#000"/>
<rect x="293" y="96" width="1" height="1" fill="#000"/>
<rect x="287" y="97" width="1" height="1" fill="#000"/>
<rect x="291" y="97" width="1" height="1" fill="#000"/>
<rect x="292" y="97" width="1" height="1" fill="#000"/>
<rect x="293" y="97" width="1" height="1" fill="#000"/>
<rect x="287" y="98" width="1" height="1" fill="#000"/>
<rect x="288" y="98" width="1" height="1" fill="#000"/>
<rect x="290" y="98" width="1" height="1" fill="#000"/>
<rect x="291" y="98" width="1" height="1" fill="#000"/>
<rect x="292" y="98" width="1" height="1" fill="#000"/>
<rect x="287" y="99" width="1" height="1" fill="#000"/>
<rect x="288" y="99" width="1" height="1" fill="#000"/>
<rect x="289" y="99" width="1" height="1" fill="#000"/>
<rect x="290" y="99" width="1" height="1" fill="#000"/>
<rect x="291" y="99" width="1" height="1" fill="#000"/>
<rect x="288" y="100" width="1" height="1" fill="#000"/>
<rect x="289" y="100" width="1" height="1" fill="#000"/>
<rect x="290" y="100" width="1" height="1" fill="#000"/>
<rect x="289" y="101" width="1" height="1" fill="#000"/>
<text x="161.10" y="126" font-size="12" fill="#000" textLength="41.32" lengthAdjust="spacingAndGlyphs">Función:</text>
<rect x="228" y="112" width="38" height="20" fill="#fff"/>
<rect x="228" y="112" width="38" height="1" fill="#a0a0a0"/>
<rect x="228" y="112" width="1" height="20" fill="#a0a0a0"/>
<rect x="229" y="113" width="36" height="1" fill="#696969"/>
<rect x="229" y="113" width="1" height="18" fill="#696969"/>
<rect x="228" y="131" width="38" height="1" fill="#fff"/>
<rect x="265" y="112" width="1" height="20" fill="#fff"/>
<rect x="229" y="130" width="36" height="1" fill="#e3e3e3"/>
<rect x="264" y="113" width="1" height="18" fill="#e3e3e3"/>
<rect x="284" y="115" width="13" height="13" fill="#fff"/>
<rect x="284" y="115" width="13" height="1" fill="#a0a0a0"/>
<rect x="284" y="115" width="1" height="13" fill="#a0a0a0"/>
<rect x="285" y="116" width="11" height="1" fill="#696969"/>
<rect x="285" y="116" width="1" height="11" fill="#696969"/>
<rect x="284" y="127" width="13" height="1" fill="#fff"/>
<rect x="296" y="115" width="1" height="13" fill="#fff"/>
<rect x="285" y="126" width="11" height="1" fill="#e3e3e3"/>
<rect x="295" y="116" width="1" height="11" fill="#e3e3e3"/>
<text x="161.12" y="149" font-size="12" fill="#000" textLength="56.30" lengthAdjust="spacingAndGlyphs">Conexión 1:</text>
<rect x="228" y="135" width="38" height="20" fill="#fff"/>
<rect x="228" y="135" width="38" height="1" fill="#a0a0a0"/>
<rect x="228" y="135" width="1" height="20" fill="#a0a0a0"/>
<rect x="229" y="136" width="36" height="1" fill="#696969"/>
<rect x="229" y="136" width="1" height="18" fill="#696969"/>
<rect x="228" y="154" width="38" height="1" fill="#fff"/>
<rect x="265" y="135" width="1" height="20" fill="#fff"/>
<rect x="229" y="153" width="36" height="1" fill="#e3e3e3"/>
<rect x="264" y="136" width="1" height="18" fill="#e3e3e3"/>
<text x="231.05" y="149" font-size="12" fill="#000" textLength="15.84" lengthAdjust="spacingAndGlyphs">RA</text>
<rect x="284" y="138" width="13" height="13" fill="#fff"/>
<rect x="284" y="138" width="13" height="1" fill="#a0a0a0"/>
<rect x="284" y="138" width="1" height="13" fill="#a0a0a0"/>
<rect x="285" y="139" width="11" height="1" fill="#696969"/>
<rect x="285" y="139" width="1" height="11" fill="#696969"/>
<rect x="284" y="150" width="13" height="1" fill="#fff"/>
<rect x="296" y="138" width="1" height="13" fill="#fff"/>
<rect x="285" y="149" width="11" height="1" fill="#e3e3e3"/>
<rect x="295" y="139" width="1" height="11" fill="#e3e3e3"/>
<rect x="293" y="141" width="1" height="1" fill="#000"/>
<rect x="292" y="142" width="1" height="1" fill="#000"/>
<rect x="293" y="142" width="1" height="1" fill="#000"/>
<rect x="287" y="143" width="1" height="1" fill="#000"/>
<rect x="291" y="143" width="1" height="1" fill="#000"/>
<rect x="292" y="143" width="1" height="1" fill="#000"/>
<rect x="293" y="143" width="1" height="1" fill="#000"/>
<rect x="287" y="144" width="1" height="1" fill="#000"/>
<rect x="288" y="144" width="1" height="1" fill="#000"/>
<rect x="290" y="144" width="1" height="1" fill="#000"/>
<rect x="291" y="144" width="1" height="1" fill="#000"/>
<rect x="292" y="144" width="1" height="1" fill="#000"/>
<rect x="287" y="145" width="1" height="1" fill="#000"/>
<rect x="288" y="145" width="1" height="1" fill="#000"/>
<rect x="289" y="145" width="1" height="1" fill="#000"/>
<rect x="290" y="145" width="1" height="1" fill="#000"/>
<rect x="291" y="145" width="1" height="1" fill="#000"/>
<rect x="288" y="146" width="1" height="1" fill="#000"/>
<rect x="289" y="146" width="1" height="1" fill="#000"/>
<rect x="290" y="146" width="1" height="1" fill="#000"/>
<rect x="289" y="147" width="1" height="1" fill="#000"/>
<text x="161.12" y="172" font-size="12" fill="#000" textLength="56.30" lengthAdjust="spacingAndGlyphs">Conexión 2:</text>
<rect x="228" y="157" width="38" height="20" fill="#fff"/>
<rect x="228" y="157" width="38" height="1" fill="#a0a0a0"/>
<rect x="228" y="157" width="1" height="20" fill="#a0a0a0"/>
<rect x="229" y="158" width="36" height="1" fill="#696969"/>
<rect x="229" y="158" width="1" height="18" fill="#696969"/>
<rect x="228" y="176" width="38" height="1" fill="#fff"/>
<rect x="265" y="157" width="1" height="20" fill="#fff"/>
<rect x="229" y="175" width="36" height="1" fill="#e3e3e3"/>
<rect x="264" y="158" width="1" height="18" fill="#e3e3e3"/>
<text x="231.05" y="171" font-size="12" fill="#000" textLength="16.48" lengthAdjust="spacingAndGlyphs">RC</text>
<rect x="284" y="161" width="13" height="13" fill="#fff"/>
<rect x="284" y="161" width="13" height="1" fill="#a0a0a0"/>
<rect x="284" y="161" width="1" height="13" fill="#a0a0a0"/>
<rect x="285" y="162" width="11" height="1" fill="#696969"/>
<rect x="285" y="162" width="1" height="11" fill="#696969"/>
<rect x="284" y="173" width="13" height="1" fill="#fff"/>
<rect x="296" y="161" width="1" height="13" fill="#fff"/>
<rect x="285" y="172" width="11" height="1" fill="#e3e3e3"/>
<rect x="295" y="162" width="1" height="11" fill="#e3e3e3"/>
<rect x="293" y="164" width="1" height="1" fill="#000"/>
<rect x="292" y="165" width="1" height="1" fill="#000"/>
<rect x="293" y="165" width="1" height="1" fill="#000"/>
<rect x="287" y="166" width="1" height="1" fill="#000"/>
<rect x="291" y="166" width="1" height="1" fill="#000"/>
<rect x="292" y="166" width="1" height="1" fill="#000"/>
<rect x="293" y="166" width="1" height="1" fill="#000"/>
<rect x="287" y="167" width="1" height="1" fill="#000"/>
<rect x="288" y="167" width="1" height="1" fill="#000"/>
<rect x="290" y="167" width="1" height="1" fill="#000"/>
<rect x="291" y="167" width="1" height="1" fill="#000"/>
<rect x="292" y="167" width="1" height="1" fill="#000"/>
<rect x="287" y="168" width="1" height="1" fill="#000"/>
<rect x="288" y="168" width="1" height="1" fill="#000"/>
<rect x="289" y="168" width="1" height="1" fill="#000"/>
<rect x="290" y="168" width="1" height="1" fill="#000"/>
<rect x="291" y="168" width="1" height="1" fill="#000"/>
<rect x="288" y="169" width="1" height="1" fill="#000"/>
<rect x="289" y="169" width="1" height="1" fill="#000"/>
<rect x="290" y="169" width="1" height="1" fill="#000"/>
<rect x="289" y="170" width="1" height="1" fill="#000"/>
<text x="161.12" y="193" font-size="12" fill="#000" textLength="56.30" lengthAdjust="spacingAndGlyphs">Conexión 3:</text>
<rect x="228" y="179" width="38" height="20" fill="#fff"/>
<rect x="228" y="179" width="38" height="1" fill="#a0a0a0"/>
<rect x="228" y="179" width="1" height="20" fill="#a0a0a0"/>
<rect x="229" y="180" width="36" height="1" fill="#696969"/>
<rect x="229" y="180" width="1" height="18" fill="#696969"/>
<rect x="228" y="198" width="38" height="1" fill="#fff"/>
<rect x="265" y="179" width="1" height="20" fill="#fff"/>
<rect x="229" y="197" width="36" height="1" fill="#e3e3e3"/>
<rect x="264" y="180" width="1" height="18" fill="#e3e3e3"/>
<text x="231.05" y="193" font-size="12" fill="#000" textLength="9.51" lengthAdjust="spacingAndGlyphs">I1</text>
<rect x="284" y="182" width="13" height="13" fill="#fff"/>
<rect x="284" y="182" width="13" height="1" fill="#a0a0a0"/>
<rect x="284" y="182" width="1" height="13" fill="#a0a0a0"/>
<rect x="285" y="183" width="11" height="1" fill="#696969"/>
<rect x="285" y="183" width="1" height="11" fill="#696969"/>
<rect x="284" y="194" width="13" height="1" fill="#fff"/>
<rect x="296" y="182" width="1" height="13" fill="#fff"/>
<rect x="285" y="193" width="11" height="1" fill="#e3e3e3"/>
<rect x="295" y="183" width="1" height="11" fill="#e3e3e3"/>
<rect x="293" y="185" width="1" height="1" fill="#000"/>
<rect x="292" y="186" width="1" height="1" fill="#000"/>
<rect x="293" y="186" width="1" height="1" fill="#000"/>
<rect x="287" y="187" width="1" height="1" fill="#000"/>
<rect x="291" y="187" width="1" height="1" fill="#000"/>
<rect x="292" y="187" width="1" height="1" fill="#000"/>
<rect x="293" y="187" width="1" height="1" fill="#000"/>
<rect x="287" y="188" width="1" height="1" fill="#000"/>
<rect x="288" y="188" width="1" height="1" fill="#000"/>
<rect x="290" y="188" width="1" height="1" fill="#000"/>
<rect x="291" y="188" width="1" height="1" fill="#000"/>
<rect x="292" y="188" width="1" height="1" fill="#000"/>
<rect x="287" y="189" width="1" height="1" fill="#000"/>
<rect x="288" y="189" width="1" height="1" fill="#000"/>
<rect x="289" y="189" width="1" height="1" fill="#000"/>
<rect x="290" y="189" width="1" height="1" fill="#000"/>
<rect x="291" y="189" width="1" height="1" fill="#000"/>
<rect x="288" y="190" width="1" height="1" fill="#000"/>
<rect x="289" y="190" width="1" height="1" fill="#000"/>
<rect x="290" y="190" width="1" height="1" fill="#000"/>
<rect x="289" y="191" width="1" height="1" fill="#000"/>
<text x="161.12" y="214" font-size="12" fill="#000" textLength="56.30" lengthAdjust="spacingAndGlyphs">Conexión 4:</text>
<rect x="228" y="200" width="38" height="20" fill="#fff"/>
<rect x="228" y="200" width="38" height="1" fill="#a0a0a0"/>
<rect x="228" y="200" width="1" height="20" fill="#a0a0a0"/>
<rect x="229" y="201" width="36" height="1" fill="#696969"/>
<rect x="229" y="201" width="1" height="18" fill="#696969"/>
<rect x="228" y="219" width="38" height="1" fill="#fff"/>
<rect x="265" y="200" width="1" height="20" fill="#fff"/>
<rect x="229" y="218" width="36" height="1" fill="#e3e3e3"/>
<rect x="264" y="201" width="1" height="18" fill="#e3e3e3"/>
<text x="231.05" y="214" font-size="12" fill="#000" textLength="9.51" lengthAdjust="spacingAndGlyphs">I2</text>
<rect x="284" y="204" width="13" height="13" fill="#fff"/>
<rect x="284" y="204" width="13" height="1" fill="#a0a0a0"/>
<rect x="284" y="204" width="1" height="13" fill="#a0a0a0"/>
<rect x="285" y="205" width="11" height="1" fill="#696969"/>
<rect x="285" y="205" width="1" height="11" fill="#696969"/>
<rect x="284" y="216" width="13" height="1" fill="#fff"/>
<rect x="296" y="204" width="1" height="13" fill="#fff"/>
<rect x="285" y="215" width="11" height="1" fill="#e3e3e3"/>
<rect x="295" y="205" width="1" height="11" fill="#e3e3e3"/>
<rect x="293" y="207" width="1" height="1" fill="#000"/>
<rect x="292" y="208" width="1" height="1" fill="#000"/>
<rect x="293" y="208" width="1" height="1" fill="#000"/>
<rect x="287" y="209" width="1" height="1" fill="#000"/>
<rect x="291" y="209" width="1" height="1" fill="#000"/>
<rect x="292" y="209" width="1" height="1" fill="#000"/>
<rect x="293" y="209" width="1" height="1" fill="#000"/>
<rect x="287" y="210" width="1" height="1" fill="#000"/>
<rect x="288" y="210" width="1" height="1" fill="#000"/>
<rect x="290" y="210" width="1" height="1" fill="#000"/>
<rect x="291" y="210" width="1" height="1" fill="#000"/>
<rect x="292" y="210" width="1" height="1" fill="#000"/>
<rect x="287" y="211" width="1" height="1" fill="#000"/>
<rect x="288" y="211" width="1" height="1" fill="#000"/>
<rect x="289" y="211" width="1" height="1" fill="#000"/>
<rect x="290" y="211" width="1" height="1" fill="#000"/>
<rect x="291" y="211" width="1" height="1" fill="#000"/>
<rect x="288" y="212" width="1" height="1" fill="#000"/>
<rect x="289" y="212" width="1" height="1" fill="#000"/>
<rect x="290" y="212" width="1" height="1" fill="#000"/>
<rect x="289" y="213" width="1" height="1" fill="#000"/>
<text x="161.12" y="235" font-size="12" fill="#000" textLength="56.30" lengthAdjust="spacingAndGlyphs">Conexión 5:</text>
<rect x="228" y="221" width="38" height="20" fill="#fff"/>
<rect x="228" y="221" width="38" height="1" fill="#a0a0a0"/>
<rect x="228" y="221" width="1" height="20" fill="#a0a0a0"/>
<rect x="229" y="222" width="36" height="1" fill="#696969"/>
<rect x="229" y="222" width="1" height="18" fill="#696969"/>
<rect x="228" y="240" width="38" height="1" fill="#fff"/>
<rect x="265" y="221" width="1" height="20" fill="#fff"/>
<rect x="229" y="239" width="36" height="1" fill="#e3e3e3"/>
<rect x="264" y="222" width="1" height="18" fill="#e3e3e3"/>
<text x="231.05" y="235" font-size="12" fill="#000" textLength="9.51" lengthAdjust="spacingAndGlyphs">I3</text>
<rect x="284" y="226" width="13" height="13" fill="#fff"/>
<rect x="284" y="226" width="13" height="1" fill="#a0a0a0"/>
<rect x="284" y="226" width="1" height="13" fill="#a0a0a0"/>
<rect x="285" y="227" width="11" height="1" fill="#696969"/>
<rect x="285" y="227" width="1" height="11" fill="#696969"/>
<rect x="284" y="238" width="13" height="1" fill="#fff"/>
<rect x="296" y="226" width="1" height="13" fill="#fff"/>
<rect x="285" y="237" width="11" height="1" fill="#e3e3e3"/>
<rect x="295" y="227" width="1" height="11" fill="#e3e3e3"/>
<rect x="293" y="229" width="1" height="1" fill="#000"/>
<rect x="292" y="230" width="1" height="1" fill="#000"/>
<rect x="293" y="230" width="1" height="1" fill="#000"/>
<rect x="287" y="231" width="1" height="1" fill="#000"/>
<rect x="291" y="231" width="1" height="1" fill="#000"/>
<rect x="292" y="231" width="1" height="1" fill="#000"/>
<rect x="293" y="231" width="1" height="1" fill="#000"/>
<rect x="287" y="232" width="1" height="1" fill="#000"/>
<rect x="288" y="232" width="1" height="1" fill="#000"/>
<rect x="290" y="232" width="1" height="1" fill="#000"/>
<rect x="291" y="232" width="1" height="1" fill="#000"/>
<rect x="292" y="232" width="1" height="1" fill="#000"/>
<rect x="287" y="233" width="1" height="1" fill="#000"/>
<rect x="288" y="233" width="1" height="1" fill="#000"/>
<rect x="289" y="233" width="1" height="1" fill="#000"/>
<rect x="290" y="233" width="1" height="1" fill="#000"/>
<rect x="291" y="233" width="1" height="1" fill="#000"/>
<rect x="288" y="234" width="1" height="1" fill="#000"/>
<rect x="289" y="234" width="1" height="1" fill="#000"/>
<rect x="290" y="234" width="1" height="1" fill="#000"/>
<rect x="289" y="235" width="1" height="1" fill="#000"/>
<text x="161.12" y="256" font-size="12" fill="#000" textLength="56.30" lengthAdjust="spacingAndGlyphs">Conexión 6:</text>
<rect x="228" y="242" width="38" height="20" fill="#fff"/>
<rect x="228" y="242" width="38" height="1" fill="#a0a0a0"/>
<rect x="228" y="242" width="1" height="20" fill="#a0a0a0"/>
<rect x="229" y="243" width="36" height="1" fill="#696969"/>
<rect x="229" y="243" width="1" height="18" fill="#696969"/>
<rect x="228" y="261" width="38" height="1" fill="#fff"/>
<rect x="265" y="242" width="1" height="20" fill="#fff"/>
<rect x="229" y="260" width="36" height="1" fill="#e3e3e3"/>
<rect x="264" y="243" width="1" height="18" fill="#e3e3e3"/>
<text x="231.05" y="256" font-size="12" fill="#000" textLength="9.51" lengthAdjust="spacingAndGlyphs">I4</text>
<rect x="284" y="247" width="13" height="13" fill="#fff"/>
<rect x="284" y="247" width="13" height="1" fill="#a0a0a0"/>
<rect x="284" y="247" width="1" height="13" fill="#a0a0a0"/>
<rect x="285" y="248" width="11" height="1" fill="#696969"/>
<rect x="285" y="248" width="1" height="11" fill="#696969"/>
<rect x="284" y="259" width="13" height="1" fill="#fff"/>
<rect x="296" y="247" width="1" height="13" fill="#fff"/>
<rect x="285" y="258" width="11" height="1" fill="#e3e3e3"/>
<rect x="295" y="248" width="1" height="11" fill="#e3e3e3"/>
<rect x="293" y="250" width="1" height="1" fill="#000"/>
<rect x="292" y="251" width="1" height="1" fill="#000"/>
<rect x="293" y="251" width="1" height="1" fill="#000"/>
<rect x="287" y="252" width="1" height="1" fill="#000"/>
<rect x="291" y="252" width="1" height="1" fill="#000"/>
<rect x="292" y="252" width="1" height="1" fill="#000"/>
<rect x="293" y="252" width="1" height="1" fill="#000"/>
<rect x="287" y="253" width="1" height="1" fill="#000"/>
<rect x="288" y="253" width="1" height="1" fill="#000"/>
<rect x="290" y="253" width="1" height="1" fill="#000"/>
<rect x="291" y="253" width="1" height="1" fill="#000"/>
<rect x="292" y="253" width="1" height="1" fill="#000"/>
<rect x="287" y="254" width="1" height="1" fill="#000"/>
<rect x="288" y="254" width="1" height="1" fill="#000"/>
<rect x="289" y="254" width="1" height="1" fill="#000"/>
<rect x="290" y="254" width="1" height="1" fill="#000"/>
<rect x="291" y="254" width="1" height="1" fill="#000"/>
<rect x="288" y="255" width="1" height="1" fill="#000"/>
<rect x="289" y="255" width="1" height="1" fill="#000"/>
<rect x="290" y="255" width="1" height="1" fill="#000"/>
<rect x="289" y="256" width="1" height="1" fill="#000"/>
<text x="161.12" y="277" font-size="12" fill="#000" textLength="56.20" lengthAdjust="spacingAndGlyphs">Conexión 7:</text>
<rect x="228" y="264" width="38" height="20" fill="#fff"/>
<rect x="228" y="264" width="38" height="1" fill="#a0a0a0"/>
<rect x="228" y="264" width="1" height="20" fill="#a0a0a0"/>
<rect x="229" y="265" width="36" height="1" fill="#696969"/>
<rect x="229" y="265" width="1" height="18" fill="#696969"/>
<rect x="228" y="283" width="38" height="1" fill="#fff"/>
<rect x="265" y="264" width="1" height="20" fill="#fff"/>
<rect x="229" y="282" width="36" height="1" fill="#e3e3e3"/>
<rect x="264" y="265" width="1" height="18" fill="#e3e3e3"/>
<text x="231.05" y="278" font-size="12" fill="#000" textLength="6.66" lengthAdjust="spacingAndGlyphs">+</text>
<rect x="284" y="266" width="13" height="13" fill="#fff"/>
<rect x="284" y="266" width="13" height="1" fill="#a0a0a0"/>
<rect x="284" y="266" width="1" height="13" fill="#a0a0a0"/>
<rect x="285" y="267" width="11" height="1" fill="#696969"/>
<rect x="285" y="267" width="1" height="11" fill="#696969"/>
<rect x="284" y="278" width="13" height="1" fill="#fff"/>
<rect x="296" y="266" width="1" height="13" fill="#fff"/>
<rect x="285" y="277" width="11" height="1" fill="#e3e3e3"/>
<rect x="295" y="267" width="1" height="11" fill="#e3e3e3"/>
<rect x="293" y="269" width="1" height="1" fill="#000"/>
<rect x="292" y="270" width="1" height="1" fill="#000"/>
<rect x="293" y="270" width="1" height="1" fill="#000"/>
<rect x="287" y="271" width="1" height="1" fill="#000"/>
<rect x="291" y="271" width="1" height="1" fill="#000"/>
<rect x="292" y="271" width="1" height="1" fill="#000"/>
<rect x="293" y="271" width="1" height="1" fill="#000"/>
<rect x="287" y="272" width="1" height="1" fill="#000"/>
<rect x="288" y="272" width="1" height="1" fill="#000"/>
<rect x="290" y="272" width="1" height="1" fill="#000"/>
<rect x="291" y="272" width="1" height="1" fill="#000"/>
<rect x="292" y="272" width="1" height="1" fill="#000"/>
<rect x="287" y="273" width="1" height="1" fill="#000"/>
<rect x="288" y="273" width="1" height="1" fill="#000"/>
<rect x="289" y="273" width="1" height="1" fill="#000"/>
<rect x="290" y="273" width="1" height="1" fill="#000"/>
<rect x="291" y="273" width="1" height="1" fill="#000"/>
<rect x="288" y="274" width="1" height="1" fill="#000"/>
<rect x="289" y="274" width="1" height="1" fill="#000"/>
<rect x="290" y="274" width="1" height="1" fill="#000"/>
<rect x="289" y="275" width="1" height="1" fill="#000"/>
<text x="162.13" y="298" font-size="12" fill="#000" textLength="55.89" lengthAdjust="spacingAndGlyphs">Conexión 8:</text>
<rect x="228" y="285" width="38" height="20" fill="#fff"/>
<rect x="228" y="285" width="38" height="1" fill="#a0a0a0"/>
<rect x="228" y="285" width="1" height="20" fill="#a0a0a0"/>
<rect x="229" y="286" width="36" height="1" fill="#696969"/>
<rect x="229" y="286" width="1" height="18" fill="#696969"/>
<rect x="228" y="304" width="38" height="1" fill="#fff"/>
<rect x="265" y="285" width="1" height="20" fill="#fff"/>
<rect x="229" y="303" width="36" height="1" fill="#e3e3e3"/>
<rect x="264" y="286" width="1" height="18" fill="#e3e3e3"/>
<text x="231.05" y="299" font-size="12" fill="#000" textLength="14.90" lengthAdjust="spacingAndGlyphs">R+</text>
<rect x="284" y="287" width="13" height="13" fill="#fff"/>
<rect x="284" y="287" width="13" height="1" fill="#a0a0a0"/>
<rect x="284" y="287" width="1" height="13" fill="#a0a0a0"/>
<rect x="285" y="288" width="11" height="1" fill="#696969"/>
<rect x="285" y="288" width="1" height="11" fill="#696969"/>
<rect x="284" y="299" width="13" height="1" fill="#fff"/>
<rect x="296" y="287" width="1" height="13" fill="#fff"/>
<rect x="285" y="298" width="11" height="1" fill="#e3e3e3"/>
<rect x="295" y="288" width="1" height="11" fill="#e3e3e3"/>
<rect x="293" y="290" width="1" height="1" fill="#000"/>
<rect x="292" y="291" width="1" height="1" fill="#000"/>
<rect x="293" y="291" width="1" height="1" fill="#000"/>
<rect x="287" y="292" width="1" height="1" fill="#000"/>
<rect x="291" y="292" width="1" height="1" fill="#000"/>
<rect x="292" y="292" width="1" height="1" fill="#000"/>
<rect x="293" y="292" width="1" height="1" fill="#000"/>
<rect x="287" y="293" width="1" height="1" fill="#000"/>
<rect x="288" y="293" width="1" height="1" fill="#000"/>
<rect x="290" y="293" width="1" height="1" fill="#000"/>
<rect x="291" y="293" width="1" height="1" fill="#000"/>
<rect x="292" y="293" width="1" height="1" fill="#000"/>
<rect x="287" y="294" width="1" height="1" fill="#000"/>
<rect x="288" y="294" width="1" height="1" fill="#000"/>
<rect x="289" y="294" width="1" height="1" fill="#000"/>
<rect x="290" y="294" width="1" height="1" fill="#000"/>
<rect x="291" y="294" width="1" height="1" fill="#000"/>
<rect x="288" y="295" width="1" height="1" fill="#000"/>
<rect x="289" y="295" width="1" height="1" fill="#000"/>
<rect x="290" y="295" width="1" height="1" fill="#000"/>
<rect x="289" y="296" width="1" height="1" fill="#000"/>
<text x="162.13" y="321" font-size="12" fill="#000" textLength="55.89" lengthAdjust="spacingAndGlyphs">Conexión 9:</text>
<rect x="228" y="306" width="38" height="20" fill="#fff"/>
<rect x="228" y="306" width="38" height="1" fill="#a0a0a0"/>
<rect x="228" y="306" width="1" height="20" fill="#a0a0a0"/>
<rect x="229" y="307" width="36" height="1" fill="#696969"/>
<rect x="229" y="307" width="1" height="18" fill="#696969"/>
<rect x="228" y="325" width="38" height="1" fill="#fff"/>
<rect x="265" y="306" width="1" height="20" fill="#fff"/>
<rect x="229" y="324" width="36" height="1" fill="#e3e3e3"/>
<rect x="264" y="307" width="1" height="18" fill="#e3e3e3"/>
<text x="231.05" y="320" font-size="12" fill="#000" textLength="12.04" lengthAdjust="spacingAndGlyphs">R-</text>
<rect x="284" y="308" width="13" height="13" fill="#fff"/>
<rect x="284" y="308" width="13" height="1" fill="#a0a0a0"/>
<rect x="284" y="308" width="1" height="13" fill="#a0a0a0"/>
<rect x="285" y="309" width="11" height="1" fill="#696969"/>
<rect x="285" y="309" width="1" height="11" fill="#696969"/>
<rect x="284" y="320" width="13" height="1" fill="#fff"/>
<rect x="296" y="308" width="1" height="13" fill="#fff"/>
<rect x="285" y="319" width="11" height="1" fill="#e3e3e3"/>
<rect x="295" y="309" width="1" height="11" fill="#e3e3e3"/>
<rect x="293" y="311" width="1" height="1" fill="#000"/>
<rect x="292" y="312" width="1" height="1" fill="#000"/>
<rect x="293" y="312" width="1" height="1" fill="#000"/>
<rect x="287" y="313" width="1" height="1" fill="#000"/>
<rect x="291" y="313" width="1" height="1" fill="#000"/>
<rect x="292" y="313" width="1" height="1" fill="#000"/>
<rect x="293" y="313" width="1" height="1" fill="#000"/>
<rect x="287" y="314" width="1" height="1" fill="#000"/>
<rect x="288" y="314" width="1" height="1" fill="#000"/>
<rect x="290" y="314" width="1" height="1" fill="#000"/>
<rect x="291" y="314" width="1" height="1" fill="#000"/>
<rect x="292" y="314" width="1" height="1" fill="#000"/>
<rect x="287" y="315" width="1" height="1" fill="#000"/>
<rect x="288" y="315" width="1" height="1" fill="#000"/>
<rect x="289" y="315" width="1" height="1" fill="#000"/>
<rect x="290" y="315" width="1" height="1" fill="#000"/>
<rect x="291" y="315" width="1" height="1" fill="#000"/>
<rect x="288" y="316" width="1" height="1" fill="#000"/>
<rect x="289" y="316" width="1" height="1" fill="#000"/>
<rect x="290" y="316" width="1" height="1" fill="#000"/>
<rect x="289" y="317" width="1" height="1" fill="#000"/>
<text x="162.13" y="342" font-size="12" fill="#000" textLength="61.19" lengthAdjust="spacingAndGlyphs">Conexión 10:</text>
<rect x="228" y="327" width="38" height="20" fill="#fff"/>
<rect x="228" y="327" width="38" height="1" fill="#a0a0a0"/>
<rect x="228" y="327" width="1" height="20" fill="#a0a0a0"/>
<rect x="229" y="328" width="36" height="1" fill="#696969"/>
<rect x="229" y="328" width="1" height="18" fill="#696969"/>
<rect x="228" y="346" width="38" height="1" fill="#fff"/>
<rect x="265" y="327" width="1" height="20" fill="#fff"/>
<rect x="229" y="345" width="36" height="1" fill="#e3e3e3"/>
<rect x="264" y="328" width="1" height="18" fill="#e3e3e3"/>
<text x="231.05" y="341" font-size="12" fill="#000" textLength="6.66" lengthAdjust="spacingAndGlyphs">+</text>
<rect x="284" y="331" width="13" height="13" fill="#fff"/>
<rect x="284" y="331" width="13" height="1" fill="#a0a0a0"/>
<rect x="284" y="331" width="1" height="13" fill="#a0a0a0"/>
<rect x="285" y="332" width="11" height="1" fill="#696969"/>
<rect x="285" y="332" width="1" height="11" fill="#696969"/>
<rect x="284" y="343" width="13" height="1" fill="#fff"/>
<rect x="296" y="331" width="1" height="13" fill="#fff"/>
<rect x="285" y="342" width="11" height="1" fill="#e3e3e3"/>
<rect x="295" y="332" width="1" height="11" fill="#e3e3e3"/>
<rect x="293" y="334" width="1" height="1" fill="#000"/>
<rect x="292" y="335" width="1" height="1" fill="#000"/>
<rect x="293" y="335" width="1" height="1" fill="#000"/>
<rect x="287" y="336" width="1" height="1" fill="#000"/>
<rect x="291" y="336" width="1" height="1" fill="#000"/>
<rect x="292" y="336" width="1" height="1" fill="#000"/>
<rect x="293" y="336" width="1" height="1" fill="#000"/>
<rect x="287" y="337" width="1" height="1" fill="#000"/>
<rect x="288" y="337" width="1" height="1" fill="#000"/>
<rect x="290" y="337" width="1" height="1" fill="#000"/>
<rect x="291" y="337" width="1" height="1" fill="#000"/>
<rect x="292" y="337" width="1" height="1" fill="#000"/>
<rect x="287" y="338" width="1" height="1" fill="#000"/>
<rect x="288" y="338" width="1" height="1" fill="#000"/>
<rect x="289" y="338" width="1" height="1" fill="#000"/>
<rect x="290" y="338" width="1" height="1" fill="#000"/>
<rect x="291" y="338" width="1" height="1" fill="#000"/>
<rect x="288" y="339" width="1" height="1" fill="#000"/>
<rect x="289" y="339" width="1" height="1" fill="#000"/>
<rect x="290" y="339" width="1" height="1" fill="#000"/>
<rect x="289" y="340" width="1" height="1" fill="#000"/>
<text x="162.12" y="363" font-size="12" fill="#000" textLength="61.30" lengthAdjust="spacingAndGlyphs">Conexión 11:</text>
<rect x="228" y="349" width="38" height="20" fill="#fff"/>
<rect x="228" y="349" width="38" height="1" fill="#a0a0a0"/>
<rect x="228" y="349" width="1" height="20" fill="#a0a0a0"/>
<rect x="229" y="350" width="36" height="1" fill="#696969"/>
<rect x="229" y="350" width="1" height="18" fill="#696969"/>
<rect x="228" y="368" width="38" height="1" fill="#fff"/>
<rect x="265" y="349" width="1" height="20" fill="#fff"/>
<rect x="229" y="367" width="36" height="1" fill="#e3e3e3"/>
<rect x="264" y="350" width="1" height="18" fill="#e3e3e3"/>
<text x="232.00" y="363" font-size="12" fill="#000" textLength="10.78" lengthAdjust="spacingAndGlyphs">AI</text>
<rect x="284" y="352" width="13" height="13" fill="#fff"/>
<rect x="284" y="352" width="13" height="1" fill="#a0a0a0"/>
<rect x="284" y="352" width="1" height="13" fill="#a0a0a0"/>
<rect x="285" y="353" width="11" height="1" fill="#696969"/>
<rect x="285" y="353" width="1" height="11" fill="#696969"/>
<rect x="284" y="364" width="13" height="1" fill="#fff"/>
<rect x="296" y="352" width="1" height="13" fill="#fff"/>
<rect x="285" y="363" width="11" height="1" fill="#e3e3e3"/>
<rect x="295" y="353" width="1" height="11" fill="#e3e3e3"/>
<rect x="293" y="355" width="1" height="1" fill="#000"/>
<rect x="292" y="356" width="1" height="1" fill="#000"/>
<rect x="293" y="356" width="1" height="1" fill="#000"/>
<rect x="287" y="357" width="1" height="1" fill="#000"/>
<rect x="291" y="357" width="1" height="1" fill="#000"/>
<rect x="292" y="357" width="1" height="1" fill="#000"/>
<rect x="293" y="357" width="1" height="1" fill="#000"/>
<rect x="287" y="358" width="1" height="1" fill="#000"/>
<rect x="288" y="358" width="1" height="1" fill="#000"/>
<rect x="290" y="358" width="1" height="1" fill="#000"/>
<rect x="291" y="358" width="1" height="1" fill="#000"/>
<rect x="292" y="358" width="1" height="1" fill="#000"/>
<rect x="287" y="359" width="1" height="1" fill="#000"/>
<rect x="288" y="359" width="1" height="1" fill="#000"/>
<rect x="289" y="359" width="1" height="1" fill="#000"/>
<rect x="290" y="359" width="1" height="1" fill="#000"/>
<rect x="291" y="359" width="1" height="1" fill="#000"/>
<rect x="288" y="360" width="1" height="1" fill="#000"/>
<rect x="289" y="360" width="1" height="1" fill="#000"/>
<rect x="290" y="360" width="1" height="1" fill="#000"/>
<rect x="289" y="361" width="1" height="1" fill="#000"/>
<text x="162.13" y="384" font-size="12" fill="#000" textLength="61.19" lengthAdjust="spacingAndGlyphs">Conexión 12:</text>
<rect x="228" y="370" width="38" height="20" fill="#fff"/>
<rect x="228" y="370" width="38" height="1" fill="#a0a0a0"/>
<rect x="228" y="370" width="1" height="20" fill="#a0a0a0"/>
<rect x="229" y="371" width="36" height="1" fill="#696969"/>
<rect x="229" y="371" width="1" height="18" fill="#696969"/>
<rect x="228" y="389" width="38" height="1" fill="#fff"/>
<rect x="265" y="370" width="1" height="20" fill="#fff"/>
<rect x="229" y="388" width="36" height="1" fill="#e3e3e3"/>
<rect x="264" y="371" width="1" height="18" fill="#e3e3e3"/>
<text x="232.00" y="384" font-size="12" fill="#000" textLength="13.95" lengthAdjust="spacingAndGlyphs">0V</text>
<rect x="284" y="375" width="13" height="13" fill="#fff"/>
<rect x="284" y="375" width="13" height="1" fill="#a0a0a0"/>
<rect x="284" y="375" width="1" height="13" fill="#a0a0a0"/>
<rect x="285" y="376" width="11" height="1" fill="#696969"/>
<rect x="285" y="376" width="1" height="11" fill="#696969"/>
<rect x="284" y="387" width="13" height="1" fill="#fff"/>
<rect x="296" y="375" width="1" height="13" fill="#fff"/>
<rect x="285" y="386" width="11" height="1" fill="#e3e3e3"/>
<rect x="295" y="376" width="1" height="11" fill="#e3e3e3"/>
<rect x="293" y="378" width="1" height="1" fill="#000"/>
<rect x="292" y="379" width="1" height="1" fill="#000"/>
<rect x="293" y="379" width="1" height="1" fill="#000"/>
<rect x="287" y="380" width="1" height="1" fill="#000"/>
<rect x="291" y="380" width="1" height="1" fill="#000"/>
<rect x="292" y="380" width="1" height="1" fill="#000"/>
<rect x="293" y="380" width="1" height="1" fill="#000"/>
<rect x="287" y="381" width="1" height="1" fill="#000"/>
<rect x="288" y="381" width="1" height="1" fill="#000"/>
<rect x="290" y="381" width="1" height="1" fill="#000"/>
<rect x="291" y="381" width="1" height="1" fill="#000"/>
<rect x="292" y="381" width="1" height="1" fill="#000"/>
<rect x="287" y="382" width="1" height="1" fill="#000"/>
<rect x="288" y="382" width="1" height="1" fill="#000"/>
<rect x="289" y="382" width="1" height="1" fill="#000"/>
<rect x="290" y="382" width="1" height="1" fill="#000"/>
<rect x="291" y="382" width="1" height="1" fill="#000"/>
<rect x="288" y="383" width="1" height="1" fill="#000"/>
<rect x="289" y="383" width="1" height="1" fill="#000"/>
<rect x="290" y="383" width="1" height="1" fill="#000"/>
<rect x="289" y="384" width="1" height="1" fill="#000"/>
<text x="162.13" y="406" font-size="12" fill="#000" textLength="61.19" lengthAdjust="spacingAndGlyphs">Conexión 13:</text>
<rect x="228" y="391" width="38" height="20" fill="#fff"/>
<rect x="228" y="391" width="38" height="1" fill="#a0a0a0"/>
<rect x="228" y="391" width="1" height="20" fill="#a0a0a0"/>
<rect x="229" y="392" width="36" height="1" fill="#696969"/>
<rect x="229" y="392" width="1" height="18" fill="#696969"/>
<rect x="228" y="410" width="38" height="1" fill="#fff"/>
<rect x="265" y="391" width="1" height="20" fill="#fff"/>
<rect x="229" y="409" width="36" height="1" fill="#e3e3e3"/>
<rect x="264" y="392" width="1" height="18" fill="#e3e3e3"/>
<text x="232.00" y="405" font-size="12" fill="#000" textLength="16.48" lengthAdjust="spacingAndGlyphs">AO</text>
<rect x="284" y="396" width="13" height="13" fill="#fff"/>
<rect x="284" y="396" width="13" height="1" fill="#a0a0a0"/>
<rect x="284" y="396" width="1" height="13" fill="#a0a0a0"/>
<rect x="285" y="397" width="11" height="1" fill="#696969"/>
<rect x="285" y="397" width="1" height="11" fill="#696969"/>
<rect x="284" y="408" width="13" height="1" fill="#fff"/>
<rect x="296" y="396" width="1" height="13" fill="#fff"/>
<rect x="285" y="407" width="11" height="1" fill="#e3e3e3"/>
<rect x="295" y="397" width="1" height="11" fill="#e3e3e3"/>
<rect x="293" y="399" width="1" height="1" fill="#000"/>
<rect x="292" y="400" width="1" height="1" fill="#000"/>
<rect x="293" y="400" width="1" height="1" fill="#000"/>
<rect x="287" y="401" width="1" height="1" fill="#000"/>
<rect x="291" y="401" width="1" height="1" fill="#000"/>
<rect x="292" y="401" width="1" height="1" fill="#000"/>
<rect x="293" y="401" width="1" height="1" fill="#000"/>
<rect x="287" y="402" width="1" height="1" fill="#000"/>
<rect x="288" y="402" width="1" height="1" fill="#000"/>
<rect x="290" y="402" width="1" height="1" fill="#000"/>
<rect x="291" y="402" width="1" height="1" fill="#000"/>
<rect x="292" y="402" width="1" height="1" fill="#000"/>
<rect x="287" y="403" width="1" height="1" fill="#000"/>
<rect x="288" y="403" width="1" height="1" fill="#000"/>
<rect x="289" y="403" width="1" height="1" fill="#000"/>
<rect x="290" y="403" width="1" height="1" fill="#000"/>
<rect x="291" y="403" width="1" height="1" fill="#000"/>
<rect x="288" y="404" width="1" height="1" fill="#000"/>
<rect x="289" y="404" width="1" height="1" fill="#000"/>
<rect x="290" y="404" width="1" height="1" fill="#000"/>
<rect x="289" y="405" width="1" height="1" fill="#000"/>
<rect x="341" y="77" width="133" height="1" fill="#a0a0a0"/>
<rect x="341" y="77" width="1" height="94" fill="#a0a0a0"/>
<rect x="341" y="170" width="133" height="1" fill="#a0a0a0"/>
<rect x="473" y="77" width="1" height="94" fill="#a0a0a0"/>
<rect x="342" y="78" width="131" height="1" fill="#fff"/>
<rect x="342" y="78" width="1" height="92" fill="#fff"/>
<rect x="341" y="171" width="134" height="1" fill="#fff"/>
<rect x="474" y="77" width="1" height="95" fill="#fff"/>
<rect x="348" y="71" width="81" height="12" fill="#f0f0f0"/>
<text x="350.00" y="82" font-size="12" fill="#000" textLength="76.26" lengthAdjust="spacingAndGlyphs">Velocidad motor</text>
<g shape-rendering="geometricPrecision">
<circle cx="381" cy="99" r="5.5" fill="#fff"/>
<path d="M377.111,102.889 A5.5,5.5 0 0 1 384.889,95.111" stroke="#a0a0a0" fill="none" stroke-width="1"/>
<path d="M384.889,95.111 A5.5,5.5 0 0 1 377.111,102.889" stroke="#fff" fill="none" stroke-width="1"/>
<path d="M377.818,102.182 A4.5,4.5 0 0 1 384.182,95.818" stroke="#696969" fill="none" stroke-width="1"/>
<path d="M384.182,95.818 A4.5,4.5 0 0 1 377.818,102.182" stroke="#e3e3e3" fill="none" stroke-width="1"/>
</g>
<rect x="379" y="98" width="4" height="2" fill="#000"/>
<rect x="380" y="97" width="2" height="4" fill="#000"/>
<g shape-rendering="geometricPrecision">
<circle cx="381" cy="117" r="5.5" fill="#fff"/>
<path d="M377.111,120.889 A5.5,5.5 0 0 1 384.889,113.111" stroke="#a0a0a0" fill="none" stroke-width="1"/>
<path d="M384.889,113.111 A5.5,5.5 0 0 1 377.111,120.889" stroke="#fff" fill="none" stroke-width="1"/>
<path d="M377.818,120.182 A4.5,4.5 0 0 1 384.182,113.818" stroke="#696969" fill="none" stroke-width="1"/>
<path d="M384.182,113.818 A4.5,4.5 0 0 1 377.818,120.182" stroke="#e3e3e3" fill="none" stroke-width="1"/>
</g>
<g shape-rendering="geometricPrecision">
<circle cx="381" cy="137" r="5.5" fill="#fff"/>
<path d="M377.111,140.889 A5.5,5.5 0 0 1 384.889,133.111" stroke="#a0a0a0" fill="none" stroke-width="1"/>
<path d="M384.889,133.111 A5.5,5.5 0 0 1 377.111,140.889" stroke="#fff" fill="none" stroke-width="1"/>
<path d="M377.818,140.182 A4.5,4.5 0 0 1 384.182,133.818" stroke="#696969" fill="none" stroke-width="1"/>
<path d="M384.182,133.818 A4.5,4.5 0 0 1 377.818,140.182" stroke="#e3e3e3" fill="none" stroke-width="1"/>
</g>
<g shape-rendering="geometricPrecision">
<circle cx="381" cy="156" r="5.5" fill="#fff"/>
<path d="M377.111,159.889 A5.5,5.5 0 0 1 384.889,152.111" stroke="#a0a0a0" fill="none" stroke-width="1"/>
<path d="M384.889,152.111 A5.5,5.5 0 0 1 377.111,159.889" stroke="#fff" fill="none" stroke-width="1"/>
<path d="M377.818,159.182 A4.5,4.5 0 0 1 384.182,152.818" stroke="#696969" fill="none" stroke-width="1"/>
<path d="M384.182,152.818 A4.5,4.5 0 0 1 377.818,159.182" stroke="#e3e3e3" fill="none" stroke-width="1"/>
</g>
<text x="391.86" y="104" font-size="12" fill="#000" textLength="24.99" lengthAdjust="spacingAndGlyphs">3000</text>
<text x="391.86" y="122" font-size="12" fill="#000" textLength="24.99" lengthAdjust="spacingAndGlyphs">1500</text>
<text x="391.86" y="142" font-size="12" fill="#000" textLength="24.99" lengthAdjust="spacingAndGlyphs">1000</text>
<text x="391.85" y="161" font-size="12" fill="#000" textLength="19.03" lengthAdjust="spacingAndGlyphs">750</text>
<rect x="485" y="77" width="152" height="1" fill="#a0a0a0"/>
<rect x="485" y="77" width="1" height="94" fill="#a0a0a0"/>
<rect x="485" y="170" width="152" height="1" fill="#a0a0a0"/>
<rect x="636" y="77" width="1" height="94" fill="#a0a0a0"/>
<rect x="486" y="78" width="150" height="1" fill="#fff"/>
<rect x="486" y="78" width="1" height="92" fill="#fff"/>
<rect x="485" y="171" width="153" height="1" fill="#fff"/>
<rect x="637" y="77" width="1" height="95" fill="#fff"/>
<rect x="492" y="71" width="101" height="12" fill="#f0f0f0"/>
<text x="493.71" y="82" font-size="12" fill="#000" textLength="97.55" lengthAdjust="spacingAndGlyphs">Control de velocidad</text>
<text x="503.83" y="102" font-size="12" fill="#000" textLength="87.29" lengthAdjust="spacingAndGlyphs">Entradas Digitales:</text>
<g shape-rendering="geometricPrecision">
<circle cx="550" cy="119" r="5.5" fill="#fff"/>
<path d="M546.111,122.889 A5.5,5.5 0 0 1 553.889,115.111" stroke="#a0a0a0" fill="none" stroke-width="1"/>
<path d="M553.889,115.111 A5.5,5.5 0 0 1 546.111,122.889" stroke="#fff" fill="none" stroke-width="1"/>
<path d="M546.818,122.182 A4.5,4.5 0 0 1 553.182,115.818" stroke="#696969" fill="none" stroke-width="1"/>
<path d="M553.182,115.818 A4.5,4.5 0 0 1 546.818,122.182" stroke="#e3e3e3" fill="none" stroke-width="1"/>
</g>
<rect x="548" y="118" width="4" height="2" fill="#000"/>
<rect x="549" y="117" width="2" height="4" fill="#000"/>
<g shape-rendering="geometricPrecision">
<circle cx="550" cy="134" r="5.5" fill="#fff"/>
<path d="M546.111,137.889 A5.5,5.5 0 0 1 553.889,130.111" stroke="#a0a0a0" fill="none" stroke-width="1"/>
<path d="M553.889,130.111 A5.5,5.5 0 0 1 546.111,137.889" stroke="#fff" fill="none" stroke-width="1"/>
<path d="M546.818,137.182 A4.5,4.5 0 0 1 553.182,130.818" stroke="#696969" fill="none" stroke-width="1"/>
<path d="M553.182,130.818 A4.5,4.5 0 0 1 546.818,137.182" stroke="#e3e3e3" fill="none" stroke-width="1"/>
</g>
<text x="560.29" y="124" font-size="12" fill="#000" textLength="33.33" lengthAdjust="spacingAndGlyphs">2 Hilos</text>
<text x="560.29" y="140" font-size="12" fill="#000" textLength="33.33" lengthAdjust="spacingAndGlyphs">3 Hilos</text>
<rect x="504" y="149" width="13" height="13" fill="#fff"/>
<rect x="504" y="149" width="13" height="1" fill="#a0a0a0"/>
<rect x="504" y="149" width="1" height="13" fill="#a0a0a0"/>
<rect x="505" y="150" width="11" height="1" fill="#696969"/>
<rect x="505" y="150" width="1" height="11" fill="#696969"/>
<rect x="504" y="161" width="13" height="1" fill="#fff"/>
<rect x="516" y="149" width="1" height="13" fill="#fff"/>
<rect x="505" y="160" width="11" height="1" fill="#e3e3e3"/>
<rect x="515" y="150" width="1" height="11" fill="#e3e3e3"/>
<text x="521.38" y="160" font-size="12" fill="#000" textLength="70.29" lengthAdjust="spacingAndGlyphs">Pot. Analógico</text>
<rect x="342" y="180" width="295" height="1" fill="#a0a0a0"/>
<rect x="342" y="180" width="1" height="63" fill="#a0a0a0"/>
<rect x="342" y="242" width="295" height="1" fill="#a0a0a0"/>
<rect x="636" y="180" width="1" height="63" fill="#a0a0a0"/>
<rect x="343" y="181" width="293" height="1" fill="#fff"/>
<rect x="343" y="181" width="1" height="61" fill="#fff"/>
<rect x="342" y="243" width="296" height="1" fill="#fff"/>
<rect x="637" y="180" width="1" height="64" fill="#fff"/>
<rect x="349" y="174" width="97" height="12" fill="#f0f0f0"/>
<text x="350.82" y="185" font-size="12" fill="#000" textLength="93.44" lengthAdjust="spacingAndGlyphs">Frecuencia variador</text>
<text x="376.72" y="204" font-size="12" fill="#000" textLength="145.40" lengthAdjust="spacingAndGlyphs">Frecuencia mínima (0-200 Hz):</text>
<text x="376.73" y="227" font-size="12" fill="#000" textLength="146.19" lengthAdjust="spacingAndGlyphs">Frecuencia máxima (0-200 Hz):</text>
<rect x="590" y="190" width="38" height="20" fill="#fff"/>
<rect x="590" y="190" width="38" height="1" fill="#a0a0a0"/>
<rect x="590" y="190" width="1" height="20" fill="#a0a0a0"/>
<rect x="591" y="191" width="36" height="1" fill="#696969"/>
<rect x="591" y="191" width="1" height="18" fill="#696969"/>
<rect x="590" y="209" width="38" height="1" fill="#fff"/>
<rect x="627" y="190" width="1" height="20" fill="#fff"/>
<rect x="591" y="208" width="36" height="1" fill="#e3e3e3"/>
<rect x="626" y="191" width="1" height="18" fill="#e3e3e3"/>
<text x="593.05" y="204" font-size="12" fill="#000" textLength="6.35" lengthAdjust="spacingAndGlyphs">1</text>
<rect x="590" y="211" width="38" height="20" fill="#fff"/>
<rect x="590" y="211" width="38" height="1" fill="#a0a0a0"/>
<rect x="590" y="211" width="1" height="20" fill="#a0a0a0"/>
<rect x="591" y="212" width="36" height="1" fill="#696969"/>
<rect x="591" y="212" width="1" height="18" fill="#696969"/>
<rect x="590" y="230" width="38" height="1" fill="#fff"/>
<rect x="627" y="211" width="1" height="20" fill="#fff"/>
<rect x="591" y="229" width="36" height="1" fill="#e3e3e3"/>
<rect x="626" y="212" width="1" height="18" fill="#e3e3e3"/>
<text x="593.05" y="225" font-size="12" fill="#000" textLength="19.03" lengthAdjust="spacingAndGlyphs">200</text>
<rect x="342" y="253" width="295" height="1" fill="#a0a0a0"/>
<rect x="342" y="253" width="1" height="112" fill="#a0a0a0"/>
<rect x="342" y="364" width="295" height="1" fill="#a0a0a0"/>
<rect x="636" y="253" width="1" height="112" fill="#a0a0a0"/>
<rect x="343" y="254" width="293" height="1" fill="#fff"/>
<rect x="343" y="254" width="1" height="110" fill="#fff"/>
<rect x="342" y="365" width="296" height="1" fill="#fff"/>
<rect x="637" y="253" width="1" height="113" fill="#fff"/>
<rect x="349" y="247" width="133" height="12" fill="#f0f0f0"/>
<text x="351.30" y="259" font-size="12" fill="#000" textLength="127.90" lengthAdjust="spacingAndGlyphs">Velocidad preseleccionada</text>
<text x="361.71" y="279" font-size="12" fill="#000" textLength="193.50" lengthAdjust="spacingAndGlyphs">1ª Velocidad preseleccionada (0-200Hz):</text>
<text x="375.20" y="293" font-size="12" fill="#000" textLength="154.53" lengthAdjust="spacingAndGlyphs">Valor ajustado entrada analógica</text>
<text x="361.71" y="313" font-size="12" fill="#000" textLength="193.50" lengthAdjust="spacingAndGlyphs">2ª Velocidad preseleccionada (0-200Hz):</text>
<text x="361.71" y="334" font-size="12" fill="#000" textLength="193.50" lengthAdjust="spacingAndGlyphs">3ª Velocidad preseleccionada (0-200Hz):</text>
<text x="363.80" y="355" font-size="12" fill="#000" textLength="192.51" lengthAdjust="spacingAndGlyphs">4ª Velocidad preseleccionada (0-200Hz):</text>
<rect x="590" y="299" width="38" height="20" fill="#fff"/>
<rect x="590" y="299" width="38" height="1" fill="#a0a0a0"/>
<rect x="590" y="299" width="1" height="20" fill="#a0a0a0"/>
<rect x="591" y="300" width="36" height="1" fill="#696969"/>
<rect x="591" y="300" width="1" height="18" fill="#696969"/>
<rect x="590" y="318" width="38" height="1" fill="#fff"/>
<rect x="627" y="299" width="1" height="20" fill="#fff"/>
<rect x="591" y="317" width="36" height="1" fill="#e3e3e3"/>
<rect x="626" y="300" width="1" height="18" fill="#e3e3e3"/>
<text x="593.05" y="313" font-size="12" fill="#000" textLength="12.69" lengthAdjust="spacingAndGlyphs">10</text>
<rect x="590" y="320" width="38" height="20" fill="#fff"/>
<rect x="590" y="320" width="38" height="1" fill="#a0a0a0"/>
<rect x="590" y="320" width="1" height="20" fill="#a0a0a0"/>
<rect x="591" y="321" width="36" height="1" fill="#696969"/>
<rect x="591" y="321" width="1" height="18" fill="#696969"/>
<rect x="590" y="339" width="38" height="1" fill="#fff"/>
<rect x="627" y="320" width="1" height="20" fill="#fff"/>
<rect x="591" y="338" width="36" height="1" fill="#e3e3e3"/>
<rect x="626" y="321" width="1" height="18" fill="#e3e3e3"/>
<text x="593.05" y="334" font-size="12" fill="#000" textLength="12.69" lengthAdjust="spacingAndGlyphs">25</text>
<rect x="590" y="343" width="38" height="20" fill="#fff"/>
<rect x="590" y="343" width="38" height="1" fill="#a0a0a0"/>
<rect x="590" y="343" width="1" height="20" fill="#a0a0a0"/>
<rect x="591" y="344" width="36" height="1" fill="#696969"/>
<rect x="591" y="344" width="1" height="18" fill="#696969"/>
<rect x="590" y="362" width="38" height="1" fill="#fff"/>
<rect x="627" y="343" width="1" height="20" fill="#fff"/>
<rect x="591" y="361" width="36" height="1" fill="#e3e3e3"/>
<rect x="626" y="344" width="1" height="18" fill="#e3e3e3"/>
<text x="593.05" y="357" font-size="12" fill="#000" textLength="12.69" lengthAdjust="spacingAndGlyphs">50</text>
<rect x="342" y="376" width="295" height="1" fill="#a0a0a0"/>
<rect x="342" y="376" width="1" height="63" fill="#a0a0a0"/>
<rect x="342" y="438" width="295" height="1" fill="#a0a0a0"/>
<rect x="636" y="376" width="1" height="63" fill="#a0a0a0"/>
<rect x="343" y="377" width="293" height="1" fill="#fff"/>
<rect x="343" y="377" width="1" height="61" fill="#fff"/>
<rect x="342" y="439" width="296" height="1" fill="#fff"/>
<rect x="637" y="376" width="1" height="64" fill="#fff"/>
<rect x="350" y="370" width="76" height="12" fill="#f0f0f0"/>
<text x="352.00" y="381" font-size="12" fill="#000" textLength="71.13" lengthAdjust="spacingAndGlyphs">Tiempo rampas</text>
<text x="363.40" y="406" font-size="12" fill="#000" textLength="193.79" lengthAdjust="spacingAndGlyphs">Tiempo de rampa aceleración (0-99 Seg):</text>
<text x="363.40" y="425" font-size="12" fill="#000" textLength="210.99" lengthAdjust="spacingAndGlyphs">Tiempo de rampa desaceleración (0-99 Seg):</text>
<rect x="590" y="390" width="38" height="20" fill="#fff"/>
<rect x="590" y="390" width="38" height="1" fill="#a0a0a0"/>
<rect x="590" y="390" width="1" height="20" fill="#a0a0a0"/>
<rect x="591" y="391" width="36" height="1" fill="#696969"/>
<rect x="591" y="391" width="1" height="18" fill="#696969"/>
<rect x="590" y="409" width="38" height="1" fill="#fff"/>
<rect x="627" y="390" width="1" height="20" fill="#fff"/>
<rect x="591" y="408" width="36" height="1" fill="#e3e3e3"/>
<rect x="626" y="391" width="1" height="18" fill="#e3e3e3"/>
<text x="593.05" y="404" font-size="12" fill="#000" textLength="6.35" lengthAdjust="spacingAndGlyphs">5</text>
<rect x="590" y="411" width="38" height="20" fill="#fff"/>
<rect x="590" y="411" width="38" height="1" fill="#a0a0a0"/>
<rect x="590" y="411" width="1" height="20" fill="#a0a0a0"/>
<rect x="591" y="412" width="36" height="1" fill="#696969"/>
<rect x="591" y="412" width="1" height="18" fill="#696969"/>
<rect x="590" y="430" width="38" height="1" fill="#fff"/>
<rect x="627" y="411" width="1" height="20" fill="#fff"/>
<rect x="591" y="429" width="36" height="1" fill="#e3e3e3"/>
<rect x="626" y="412" width="1" height="18" fill="#e3e3e3"/>
<text x="593.05" y="425" font-size="12" fill="#000" textLength="6.35" lengthAdjust="spacingAndGlyphs">5</text>
<rect x="341" y="449" width="296" height="1" fill="#a0a0a0"/>
<rect x="341" y="449" width="1" height="56" fill="#a0a0a0"/>
<rect x="341" y="504" width="296" height="1" fill="#a0a0a0"/>
<rect x="636" y="449" width="1" height="56" fill="#a0a0a0"/>
<rect x="342" y="450" width="294" height="1" fill="#fff"/>
<rect x="342" y="450" width="1" height="54" fill="#fff"/>
<rect x="341" y="505" width="297" height="1" fill="#fff"/>
<rect x="637" y="449" width="1" height="57" fill="#fff"/>
<rect x="348" y="443" width="154" height="12" fill="#f0f0f0"/>
<text x="349.50" y="454" font-size="12" fill="#000" textLength="150.10" lengthAdjust="spacingAndGlyphs">Inyección de corriente continua</text>
<g shape-rendering="geometricPrecision">
<circle cx="358" cy="468" r="5.5" fill="#fff"/>
<path d="M354.111,471.889 A5.5,5.5 0 0 1 361.889,464.111" stroke="#a0a0a0" fill="none" stroke-width="1"/>
<path d="M361.889,464.111 A5.5,5.5 0 0 1 354.111,471.889" stroke="#fff" fill="none" stroke-width="1"/>
<path d="M354.818,471.182 A4.5,4.5 0 0 1 361.182,464.818" stroke="#696969" fill="none" stroke-width="1"/>
<path d="M361.182,464.818 A4.5,4.5 0 0 1 354.818,471.182" stroke="#e3e3e3" fill="none" stroke-width="1"/>
</g>
<rect x="356" y="467" width="4" height="2" fill="#000"/>
<rect x="357" y="466" width="2" height="4" fill="#000"/>
<g shape-rendering="geometricPrecision">
<circle cx="358" cy="488" r="5.5" fill="#fff"/>
<path d="M354.111,491.889 A5.5,5.5 0 0 1 361.889,484.111" stroke="#a0a0a0" fill="none" stroke-width="1"/>
<path d="M361.889,484.111 A5.5,5.5 0 0 1 354.111,491.889" stroke="#fff" fill="none" stroke-width="1"/>
<path d="M354.818,491.182 A4.5,4.5 0 0 1 361.182,484.818" stroke="#696969" fill="none" stroke-width="1"/>
<path d="M361.182,484.818 A4.5,4.5 0 0 1 354.818,491.182" stroke="#e3e3e3" fill="none" stroke-width="1"/>
</g>
<text x="369.80" y="473" font-size="12" fill="#000" textLength="210.92" lengthAdjust="spacingAndGlyphs">Tiempo de inyección en la parada(1-30 Seg):</text>
<text x="368.92" y="492" font-size="12" fill="#000" textLength="148.67" lengthAdjust="spacingAndGlyphs">inyección de forma permanente</text>
<rect x="590" y="458" width="38" height="20" fill="#fff"/>
<rect x="590" y="458" width="38" height="1" fill="#a0a0a0"/>
<rect x="590" y="458" width="1" height="20" fill="#a0a0a0"/>
<rect x="591" y="459" width="36" height="1" fill="#696969"/>
<rect x="591" y="459" width="1" height="18" fill="#696969"/>
<rect x="590" y="477" width="38" height="1" fill="#fff"/>
<rect x="627" y="458" width="1" height="20" fill="#fff"/>
<rect x="591" y="476" width="36" height="1" fill="#e3e3e3"/>
<rect x="626" y="459" width="1" height="18" fill="#e3e3e3"/>
<text x="594.00" y="472" font-size="12" fill="#000" textLength="6.35" lengthAdjust="spacingAndGlyphs">0</text>
<rect x="146" y="482" width="75" height="23" fill="#f0f0f0"/>
<rect x="146" y="482" width="75" height="1" fill="#646464"/>
<rect x="146" y="504" width="75" height="1" fill="#646464"/>
<rect x="146" y="482" width="1" height="23" fill="#646464"/>
<rect x="220" y="482" width="1" height="23" fill="#646464"/>
<rect x="147" y="483" width="73" height="1" fill="#fff"/>
<rect x="147" y="483" width="1" height="21" fill="#fff"/>
<rect x="148" y="484" width="71" height="1" fill="#e3e3e3"/>
<rect x="148" y="484" width="1" height="19" fill="#e3e3e3"/>
<rect x="147" y="503" width="73" height="1" fill="#696969"/>
<rect x="219" y="483" width="1" height="21" fill="#696969"/>
<rect x="148" y="502" width="71" height="1" fill="#a0a0a0"/>
<rect x="218" y="484" width="1" height="19" fill="#a0a0a0"/>
<text x="175.57" y="497" font-size="12" fill="#000" textLength="16.04" lengthAdjust="spacingAndGlyphs">OK</text>
<rect x="248" y="482" width="75" height="23" fill="#f0f0f0"/>
<rect x="248" y="482" width="75" height="1" fill="#fff"/>
<rect x="248" y="482" width="1" height="23" fill="#fff"/>
<rect x="249" y="483" width="73" height="1" fill="#e3e3e3"/>
<rect x="249" y="483" width="1" height="21" fill="#e3e3e3"/>
<rect x="248" y="504" width="75" height="1" fill="#696969"/>
<rect x="322" y="482" width="1" height="23" fill="#696969"/>
<rect x="249" y="503" width="73" height="1" fill="#a0a0a0"/>
<rect x="321" y="483" width="1" height="21" fill="#a0a0a0"/>
<text x="268.78" y="497" font-size="12" fill="#000" textLength="34.35" lengthAdjust="spacingAndGlyphs">Cancel</text>
</g></svg></div>
</body></html>
